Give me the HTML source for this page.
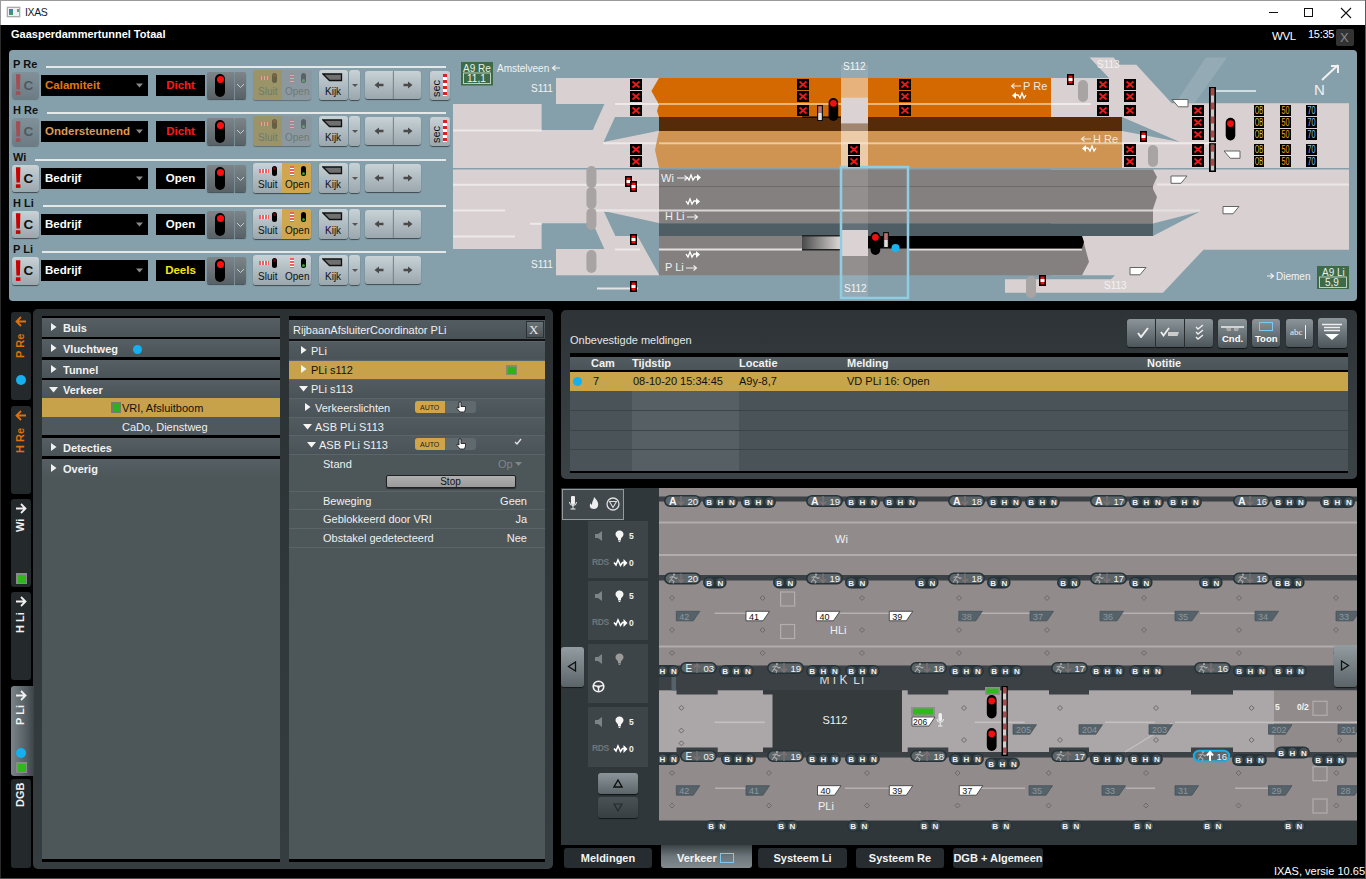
<!DOCTYPE html><html><head><meta charset="utf-8"><style>
*{margin:0;padding:0;box-sizing:border-box}
body{width:1366px;height:879px;overflow:hidden;background:#000;font-family:"Liberation Sans",sans-serif;position:relative}
.a{position:absolute}
.t{position:absolute;white-space:nowrap;line-height:1}
</style></head><body>
<div class="a" style="left:0;top:0;width:1366px;height:25px;background:#fff;border-top:1px solid #9a9a9a;border-left:1px solid #9a9a9a"></div><div class="a" style="left:0;top:25px;width:1px;height:854px;background:#2a2a2a"></div><div class="a" style="left:1365px;top:0;width:1px;height:879px;background:#5a5a5a"></div><div class="a" style="left:7px;top:7px;width:12.5px;height:10px;background:#eef0f2;border:1px solid #a8acb0;box-shadow:0 0 0 0.5px #ccc"></div><div class="a" style="left:9px;top:9px;width:4px;height:6px;background:linear-gradient(#4a7ab0,#3aa060)"></div><div class="a" style="left:17px;top:9px;width:2px;height:3px;background:linear-gradient(#5a90c0,#60b070)"></div><div class="t" style="left:25px;top:7px;font-size:10.5px;letter-spacing:-0.35px;color:#1a1a1a">IXAS</div><div class="a" style="left:1269px;top:12px;width:9px;height:1px;background:#111"></div><div class="a" style="left:1304px;top:8px;width:9px;height:9px;border:1px solid #111"></div><svg class="a" style="left:1340px;top:7px" width="12" height="12"><path d="M1 1L11 11M11 1L1 11" stroke="#111" stroke-width="1.1"/></svg><div class="t" style="left:11px;top:29px;font-size:11px;font-weight:bold;color:#fff">Gaasperdammertunnel Totaal</div><div class="t" style="left:1272px;top:30.5px;font-size:11.5px;letter-spacing:-0.4px;color:#fff">WVL</div><div class="t" style="left:1308px;top:28.5px;font-size:11px;letter-spacing:-0.3px;color:#fff">15:35</div><div class="a" style="left:1336px;top:29px;width:18px;height:17px;background:#333;border-radius:2px"></div><div class="t" style="left:1340px;top:31px;font-size:13px;color:#888">X</div><div class="a" style="left:9px;top:50px;width:1348px;height:251px;background:#86a0ab;border-radius:4px"></div><div class="t" style="left:13px;top:58.7px;font-size:11px;font-weight:bold;color:#111">P Re</div><div class="a" style="left:46px;top:65.7px;width:400px;height:2px;background:#e4e8e9"></div><div class="a" style="left:11.5px;top:71.7px;width:27.5px;height:27.5px;background:linear-gradient(#819199,#6d7c84);border-radius:3px;box-shadow:0 1px 1px rgba(0,0,0,.25)"></div><svg class="a" style="left:15px;top:74.2px" width="6" height="22"><path d="M0.9 0.2H5.4L4.9 15.5H1.4Z" fill="#a24e54"/><rect x="0.9" y="17.3" width="4.5" height="3.6" fill="#a24e54"/></svg><div class="t" style="left:23.5px;top:78.7px;font-size:13.5px;font-weight:bold;color:#4f5a5f">C</div><div class="a" style="left:41px;top:74.7px;width:107px;height:21px;background:#000"></div><div class="t" style="left:45px;top:79.7px;font-size:11.5px;font-weight:bold;color:#e0780f">Calamiteit</div><svg class="a" style="left:136px;top:82.7px" width="7" height="5"><path d="M0 0.5H7L3.5 4.5Z" fill="#8a8a8a"/></svg><div class="a" style="left:156px;top:74.7px;width:49px;height:21px;background:#000"></div><div class="t" style="left:156px;width:49px;text-align:center;top:79.7px;font-size:11.5px;font-weight:bold;color:#ff1a1a">Dicht</div><div class="a" style="left:207px;top:71.7px;width:27px;height:27px;background:linear-gradient(#7d8589,#586166);box-shadow:0 1px 1px rgba(0,0,0,.5);border-radius:2px 0 0 2px"></div><div class="a" style="left:235px;top:71.7px;width:11px;height:27px;background:linear-gradient(#7d8589,#586166);box-shadow:0 1px 1px rgba(0,0,0,.5);border-radius:0 2px 2px 0"></div><div class="a" style="left:215px;top:73.7px;width:10px;height:23px;background:#000;border-radius:5px"></div><div class="a" style="left:216.5px;top:75.7px;width:7px;height:7px;background:#ff1010;border-radius:50%"></div><svg class="a" style="left:237px;top:83.7px" width="7" height="4"><path d="M0 0L3.5 3.5L7 0" stroke="#c8cdd0" fill="none" stroke-width="1"/></svg><div class="a" style="left:253px;top:69.7px;width:58px;height:30px;background:#8b98a0;border-radius:3px;box-shadow:0 1px 1px rgba(0,0,0,.3)"></div><div class="a" style="left:253px;top:69.7px;width:29px;height:30px;background:#9b9468;border-radius:3px 0 0 3px"></div><div class="a" style="left:259px;top:75.7px;width:10px;height:4px;opacity:0.35;background:repeating-linear-gradient(90deg,#f06060 0 2px,#fff 2px 3px)"></div><div class="a" style="left:272px;top:72.7px;width:5px;height:10px;background:#000;border-radius:2.5px;opacity:0.35"><div style="margin:1px auto 0;width:3px;height:3px;border-radius:50%;background:#7a0000"></div></div><div class="a" style="left:290px;top:72.7px;width:4px;height:10px;opacity:0.35;background:repeating-linear-gradient(180deg,#f06060 0 2px,#fff 2px 3px)"></div><div class="a" style="left:301px;top:72.7px;width:5px;height:10px;background:#000;border-radius:2.5px;opacity:0.35"><div style="margin:6px auto 0;width:3px;height:3px;border-radius:50%;background:#2fa02f"></div></div><div class="t" style="left:258px;top:86.7px;font-size:10px;color:#6e7a74">Sluit</div><div class="t" style="left:285px;top:86.7px;font-size:10px;color:#6e7a74">Open</div><div class="a" style="left:319px;top:69.7px;width:29px;height:30px;background:linear-gradient(#c8d2d7,#9aa7ad);border-radius:3px;box-shadow:0 1px 1px rgba(0,0,0,.55)"></div><div class="a" style="left:349px;top:69.7px;width:11px;height:30px;background:linear-gradient(#c8d2d7,#9aa7ad);border-radius:3px;box-shadow:0 1px 1px rgba(0,0,0,.55)"></div><svg class="a" style="left:322px;top:72.7px" width="21" height="9"><path d="M1 1H19.5V7.5H7.5Z" fill="#707070" stroke="#111" stroke-width="1.3"/></svg><div class="t" style="left:325px;top:86.7px;font-size:10px;color:#111">Kijk</div><svg class="a" style="left:352px;top:83.7px" width="6" height="4"><path d="M0 0H6L3 3Z" fill="#555"/></svg><div class="a" style="left:365px;top:70.7px;width:28px;height:28px;background:linear-gradient(#c8d2d7,#9aa7ad);border-radius:3px;box-shadow:0 1px 1px rgba(0,0,0,.55);border-radius:3px 0 0 3px"></div><div class="a" style="left:393px;top:70.7px;width:28px;height:28px;background:linear-gradient(#c8d2d7,#9aa7ad);border-radius:3px;box-shadow:0 1px 1px rgba(0,0,0,.55);border-radius:0 3px 3px 0;border-left:1px solid #7b888e"></div><svg class="a" style="left:374px;top:80.7px" width="10" height="8"><path d="M0.5 4L5 0.5V2.8H9.5V5.2H5V7.5Z" fill="#4a4a4a"/></svg><svg class="a" style="left:403px;top:80.7px" width="10" height="8"><path d="M9.5 4L5 0.5V2.8H0.5V5.2H5V7.5Z" fill="#4a4a4a"/></svg><div class="a" style="left:430px;top:70.7px;width:20px;height:29px;background:linear-gradient(#c8d2d7,#9aa7ad);border-radius:3px;box-shadow:0 1px 1px rgba(0,0,0,.55)"></div><div class="t" style="left:431px;top:96.7px;font-size:11px;color:#111;transform:rotate(-90deg);transform-origin:0 0">sec</div><div class="a" style="left:443px;top:73.7px;width:4px;height:22px;background:repeating-linear-gradient(180deg,#e02020 0 3px,#fff 3px 6px)"></div><div class="t" style="left:13px;top:105.1px;font-size:11px;font-weight:bold;color:#111">H Re</div><div class="a" style="left:47px;top:112.1px;width:399px;height:2px;background:#e4e8e9"></div><div class="a" style="left:11.5px;top:118.1px;width:27.5px;height:27.5px;background:linear-gradient(#819199,#6d7c84);border-radius:3px;box-shadow:0 1px 1px rgba(0,0,0,.25)"></div><svg class="a" style="left:15px;top:120.6px" width="6" height="22"><path d="M0.9 0.2H5.4L4.9 15.5H1.4Z" fill="#a24e54"/><rect x="0.9" y="17.3" width="4.5" height="3.6" fill="#a24e54"/></svg><div class="t" style="left:23.5px;top:125.1px;font-size:13.5px;font-weight:bold;color:#4f5a5f">C</div><div class="a" style="left:41px;top:121.1px;width:107px;height:21px;background:#000"></div><div class="t" style="left:45px;top:126.1px;font-size:11.5px;font-weight:bold;color:#dc9a55">Ondersteunend</div><svg class="a" style="left:136px;top:129.1px" width="7" height="5"><path d="M0 0.5H7L3.5 4.5Z" fill="#8a8a8a"/></svg><div class="a" style="left:156px;top:121.1px;width:49px;height:21px;background:#000"></div><div class="t" style="left:156px;width:49px;text-align:center;top:126.1px;font-size:11.5px;font-weight:bold;color:#ff1a1a">Dicht</div><div class="a" style="left:207px;top:118.1px;width:27px;height:27px;background:linear-gradient(#7d8589,#586166);box-shadow:0 1px 1px rgba(0,0,0,.5);border-radius:2px 0 0 2px"></div><div class="a" style="left:235px;top:118.1px;width:11px;height:27px;background:linear-gradient(#7d8589,#586166);box-shadow:0 1px 1px rgba(0,0,0,.5);border-radius:0 2px 2px 0"></div><div class="a" style="left:215px;top:120.1px;width:10px;height:23px;background:#000;border-radius:5px"></div><div class="a" style="left:216.5px;top:122.1px;width:7px;height:7px;background:#ff1010;border-radius:50%"></div><svg class="a" style="left:237px;top:130.1px" width="7" height="4"><path d="M0 0L3.5 3.5L7 0" stroke="#c8cdd0" fill="none" stroke-width="1"/></svg><div class="a" style="left:253px;top:116.1px;width:58px;height:30px;background:#8b98a0;border-radius:3px;box-shadow:0 1px 1px rgba(0,0,0,.3)"></div><div class="a" style="left:253px;top:116.1px;width:29px;height:30px;background:#9b9468;border-radius:3px 0 0 3px"></div><div class="a" style="left:259px;top:122.1px;width:10px;height:4px;opacity:0.35;background:repeating-linear-gradient(90deg,#f06060 0 2px,#fff 2px 3px)"></div><div class="a" style="left:272px;top:119.1px;width:5px;height:10px;background:#000;border-radius:2.5px;opacity:0.35"><div style="margin:1px auto 0;width:3px;height:3px;border-radius:50%;background:#7a0000"></div></div><div class="a" style="left:290px;top:119.1px;width:4px;height:10px;opacity:0.35;background:repeating-linear-gradient(180deg,#f06060 0 2px,#fff 2px 3px)"></div><div class="a" style="left:301px;top:119.1px;width:5px;height:10px;background:#000;border-radius:2.5px;opacity:0.35"><div style="margin:6px auto 0;width:3px;height:3px;border-radius:50%;background:#2fa02f"></div></div><div class="t" style="left:258px;top:133.1px;font-size:10px;color:#6e7a74">Sluit</div><div class="t" style="left:285px;top:133.1px;font-size:10px;color:#6e7a74">Open</div><div class="a" style="left:319px;top:116.1px;width:29px;height:30px;background:linear-gradient(#c8d2d7,#9aa7ad);border-radius:3px;box-shadow:0 1px 1px rgba(0,0,0,.55)"></div><div class="a" style="left:349px;top:116.1px;width:11px;height:30px;background:linear-gradient(#c8d2d7,#9aa7ad);border-radius:3px;box-shadow:0 1px 1px rgba(0,0,0,.55)"></div><svg class="a" style="left:322px;top:119.1px" width="21" height="9"><path d="M1 1H19.5V7.5H7.5Z" fill="#707070" stroke="#111" stroke-width="1.3"/></svg><div class="t" style="left:325px;top:133.1px;font-size:10px;color:#111">Kijk</div><svg class="a" style="left:352px;top:130.1px" width="6" height="4"><path d="M0 0H6L3 3Z" fill="#555"/></svg><div class="a" style="left:365px;top:117.1px;width:28px;height:28px;background:linear-gradient(#c8d2d7,#9aa7ad);border-radius:3px;box-shadow:0 1px 1px rgba(0,0,0,.55);border-radius:3px 0 0 3px"></div><div class="a" style="left:393px;top:117.1px;width:28px;height:28px;background:linear-gradient(#c8d2d7,#9aa7ad);border-radius:3px;box-shadow:0 1px 1px rgba(0,0,0,.55);border-radius:0 3px 3px 0;border-left:1px solid #7b888e"></div><svg class="a" style="left:374px;top:127.1px" width="10" height="8"><path d="M0.5 4L5 0.5V2.8H9.5V5.2H5V7.5Z" fill="#4a4a4a"/></svg><svg class="a" style="left:403px;top:127.1px" width="10" height="8"><path d="M9.5 4L5 0.5V2.8H0.5V5.2H5V7.5Z" fill="#4a4a4a"/></svg><div class="a" style="left:430px;top:117.1px;width:20px;height:29px;background:linear-gradient(#c8d2d7,#9aa7ad);border-radius:3px;box-shadow:0 1px 1px rgba(0,0,0,.55)"></div><div class="t" style="left:431px;top:143.1px;font-size:11px;color:#111;transform:rotate(-90deg);transform-origin:0 0">sec</div><div class="a" style="left:443px;top:120.1px;width:4px;height:22px;background:repeating-linear-gradient(180deg,#e02020 0 3px,#fff 3px 6px)"></div><div class="t" style="left:13px;top:151.5px;font-size:11px;font-weight:bold;color:#111">Wi</div><div class="a" style="left:35px;top:158.5px;width:411px;height:2px;background:#e4e8e9"></div><div class="a" style="left:11.5px;top:164.5px;width:27.5px;height:27.5px;background:linear-gradient(#c8d2d7,#9aa7ad);border-radius:3px;box-shadow:0 1px 1px rgba(0,0,0,.55)"></div><svg class="a" style="left:15px;top:167.0px" width="6" height="22"><path d="M0.9 0.2H5.4L4.9 15.5H1.4Z" fill="#c80000"/><rect x="0.9" y="17.3" width="4.5" height="3.6" fill="#c80000"/></svg><div class="t" style="left:23.5px;top:171.5px;font-size:13.5px;font-weight:bold;color:#111">C</div><div class="a" style="left:41px;top:167.5px;width:107px;height:21px;background:#000"></div><div class="t" style="left:45px;top:172.5px;font-size:11.5px;font-weight:bold;color:#ffffff">Bedrijf</div><svg class="a" style="left:136px;top:175.5px" width="7" height="5"><path d="M0 0.5H7L3.5 4.5Z" fill="#8a8a8a"/></svg><div class="a" style="left:156px;top:167.5px;width:49px;height:21px;background:#000"></div><div class="t" style="left:156px;width:49px;text-align:center;top:172.5px;font-size:11.5px;font-weight:bold;color:#ffffff">Open</div><div class="a" style="left:207px;top:164.5px;width:27px;height:27px;background:linear-gradient(#7d8589,#586166);box-shadow:0 1px 1px rgba(0,0,0,.5);border-radius:2px 0 0 2px"></div><div class="a" style="left:235px;top:164.5px;width:11px;height:27px;background:linear-gradient(#7d8589,#586166);box-shadow:0 1px 1px rgba(0,0,0,.5);border-radius:0 2px 2px 0"></div><div class="a" style="left:215px;top:166.5px;width:10px;height:23px;background:#000;border-radius:5px"></div><div class="a" style="left:216.5px;top:168.5px;width:7px;height:7px;background:#ff1010;border-radius:50%"></div><svg class="a" style="left:237px;top:176.5px" width="7" height="4"><path d="M0 0L3.5 3.5L7 0" stroke="#c8cdd0" fill="none" stroke-width="1"/></svg><div class="a" style="left:253px;top:162.5px;width:58px;height:30px;background:linear-gradient(#c8d2d7,#9aa7ad);border-radius:3px;box-shadow:0 1px 1px rgba(0,0,0,.55)"></div><div class="a" style="left:282px;top:162.5px;width:29px;height:30px;background:#d0a64e;border-radius:0 3px 3px 0"></div><div class="a" style="left:259px;top:168.5px;width:10px;height:4px;opacity:1;background:repeating-linear-gradient(90deg,#f06060 0 2px,#fff 2px 3px)"></div><div class="a" style="left:272px;top:165.5px;width:5px;height:10px;background:#000;border-radius:2.5px;opacity:1"><div style="margin:1px auto 0;width:3px;height:3px;border-radius:50%;background:#7a0000"></div></div><div class="a" style="left:290px;top:165.5px;width:4px;height:10px;opacity:1;background:repeating-linear-gradient(180deg,#f06060 0 2px,#fff 2px 3px)"></div><div class="a" style="left:301px;top:165.5px;width:5px;height:10px;background:#000;border-radius:2.5px;opacity:1"><div style="margin:6px auto 0;width:3px;height:3px;border-radius:50%;background:#2fa02f"></div></div><div class="t" style="left:258px;top:179.5px;font-size:10px;color:#111">Sluit</div><div class="t" style="left:285px;top:179.5px;font-size:10px;color:#111">Open</div><div class="a" style="left:319px;top:162.5px;width:29px;height:30px;background:linear-gradient(#c8d2d7,#9aa7ad);border-radius:3px;box-shadow:0 1px 1px rgba(0,0,0,.55)"></div><div class="a" style="left:349px;top:162.5px;width:11px;height:30px;background:linear-gradient(#c8d2d7,#9aa7ad);border-radius:3px;box-shadow:0 1px 1px rgba(0,0,0,.55)"></div><svg class="a" style="left:322px;top:165.5px" width="21" height="9"><path d="M1 1H19.5V7.5H7.5Z" fill="#707070" stroke="#111" stroke-width="1.3"/></svg><div class="t" style="left:325px;top:179.5px;font-size:10px;color:#111">Kijk</div><svg class="a" style="left:352px;top:176.5px" width="6" height="4"><path d="M0 0H6L3 3Z" fill="#555"/></svg><div class="a" style="left:365px;top:163.5px;width:28px;height:28px;background:linear-gradient(#c8d2d7,#9aa7ad);border-radius:3px;box-shadow:0 1px 1px rgba(0,0,0,.55);border-radius:3px 0 0 3px"></div><div class="a" style="left:393px;top:163.5px;width:28px;height:28px;background:linear-gradient(#c8d2d7,#9aa7ad);border-radius:3px;box-shadow:0 1px 1px rgba(0,0,0,.55);border-radius:0 3px 3px 0;border-left:1px solid #7b888e"></div><svg class="a" style="left:374px;top:173.5px" width="10" height="8"><path d="M0.5 4L5 0.5V2.8H9.5V5.2H5V7.5Z" fill="#4a4a4a"/></svg><svg class="a" style="left:403px;top:173.5px" width="10" height="8"><path d="M9.5 4L5 0.5V2.8H0.5V5.2H5V7.5Z" fill="#4a4a4a"/></svg><div class="t" style="left:13px;top:197.9px;font-size:11px;font-weight:bold;color:#111">H Li</div><div class="a" style="left:43px;top:204.9px;width:403px;height:2px;background:#e4e8e9"></div><div class="a" style="left:11.5px;top:210.9px;width:27.5px;height:27.5px;background:linear-gradient(#c8d2d7,#9aa7ad);border-radius:3px;box-shadow:0 1px 1px rgba(0,0,0,.55)"></div><svg class="a" style="left:15px;top:213.4px" width="6" height="22"><path d="M0.9 0.2H5.4L4.9 15.5H1.4Z" fill="#c80000"/><rect x="0.9" y="17.3" width="4.5" height="3.6" fill="#c80000"/></svg><div class="t" style="left:23.5px;top:217.9px;font-size:13.5px;font-weight:bold;color:#111">C</div><div class="a" style="left:41px;top:213.9px;width:107px;height:21px;background:#000"></div><div class="t" style="left:45px;top:218.9px;font-size:11.5px;font-weight:bold;color:#ffffff">Bedrijf</div><svg class="a" style="left:136px;top:221.9px" width="7" height="5"><path d="M0 0.5H7L3.5 4.5Z" fill="#8a8a8a"/></svg><div class="a" style="left:156px;top:213.9px;width:49px;height:21px;background:#000"></div><div class="t" style="left:156px;width:49px;text-align:center;top:218.9px;font-size:11.5px;font-weight:bold;color:#ffffff">Open</div><div class="a" style="left:207px;top:210.9px;width:27px;height:27px;background:linear-gradient(#7d8589,#586166);box-shadow:0 1px 1px rgba(0,0,0,.5);border-radius:2px 0 0 2px"></div><div class="a" style="left:235px;top:210.9px;width:11px;height:27px;background:linear-gradient(#7d8589,#586166);box-shadow:0 1px 1px rgba(0,0,0,.5);border-radius:0 2px 2px 0"></div><div class="a" style="left:215px;top:212.9px;width:10px;height:23px;background:#000;border-radius:5px"></div><div class="a" style="left:216.5px;top:214.9px;width:7px;height:7px;background:#ff1010;border-radius:50%"></div><svg class="a" style="left:237px;top:222.9px" width="7" height="4"><path d="M0 0L3.5 3.5L7 0" stroke="#c8cdd0" fill="none" stroke-width="1"/></svg><div class="a" style="left:253px;top:208.9px;width:58px;height:30px;background:linear-gradient(#c8d2d7,#9aa7ad);border-radius:3px;box-shadow:0 1px 1px rgba(0,0,0,.55)"></div><div class="a" style="left:282px;top:208.9px;width:29px;height:30px;background:#d0a64e;border-radius:0 3px 3px 0"></div><div class="a" style="left:259px;top:214.9px;width:10px;height:4px;opacity:1;background:repeating-linear-gradient(90deg,#f06060 0 2px,#fff 2px 3px)"></div><div class="a" style="left:272px;top:211.9px;width:5px;height:10px;background:#000;border-radius:2.5px;opacity:1"><div style="margin:1px auto 0;width:3px;height:3px;border-radius:50%;background:#7a0000"></div></div><div class="a" style="left:290px;top:211.9px;width:4px;height:10px;opacity:1;background:repeating-linear-gradient(180deg,#f06060 0 2px,#fff 2px 3px)"></div><div class="a" style="left:301px;top:211.9px;width:5px;height:10px;background:#000;border-radius:2.5px;opacity:1"><div style="margin:6px auto 0;width:3px;height:3px;border-radius:50%;background:#2fa02f"></div></div><div class="t" style="left:258px;top:225.9px;font-size:10px;color:#111">Sluit</div><div class="t" style="left:285px;top:225.9px;font-size:10px;color:#111">Open</div><div class="a" style="left:319px;top:208.9px;width:29px;height:30px;background:linear-gradient(#c8d2d7,#9aa7ad);border-radius:3px;box-shadow:0 1px 1px rgba(0,0,0,.55)"></div><div class="a" style="left:349px;top:208.9px;width:11px;height:30px;background:linear-gradient(#c8d2d7,#9aa7ad);border-radius:3px;box-shadow:0 1px 1px rgba(0,0,0,.55)"></div><svg class="a" style="left:322px;top:211.9px" width="21" height="9"><path d="M1 1H19.5V7.5H7.5Z" fill="#707070" stroke="#111" stroke-width="1.3"/></svg><div class="t" style="left:325px;top:225.9px;font-size:10px;color:#111">Kijk</div><svg class="a" style="left:352px;top:222.9px" width="6" height="4"><path d="M0 0H6L3 3Z" fill="#555"/></svg><div class="a" style="left:365px;top:209.9px;width:28px;height:28px;background:linear-gradient(#c8d2d7,#9aa7ad);border-radius:3px;box-shadow:0 1px 1px rgba(0,0,0,.55);border-radius:3px 0 0 3px"></div><div class="a" style="left:393px;top:209.9px;width:28px;height:28px;background:linear-gradient(#c8d2d7,#9aa7ad);border-radius:3px;box-shadow:0 1px 1px rgba(0,0,0,.55);border-radius:0 3px 3px 0;border-left:1px solid #7b888e"></div><svg class="a" style="left:374px;top:219.9px" width="10" height="8"><path d="M0.5 4L5 0.5V2.8H9.5V5.2H5V7.5Z" fill="#4a4a4a"/></svg><svg class="a" style="left:403px;top:219.9px" width="10" height="8"><path d="M9.5 4L5 0.5V2.8H0.5V5.2H5V7.5Z" fill="#4a4a4a"/></svg><div class="t" style="left:13px;top:244.3px;font-size:11px;font-weight:bold;color:#111">P Li</div><div class="a" style="left:42px;top:251.3px;width:404px;height:2px;background:#e4e8e9"></div><div class="a" style="left:11.5px;top:257.3px;width:27.5px;height:27.5px;background:linear-gradient(#c8d2d7,#9aa7ad);border-radius:3px;box-shadow:0 1px 1px rgba(0,0,0,.55)"></div><svg class="a" style="left:15px;top:259.8px" width="6" height="22"><path d="M0.9 0.2H5.4L4.9 15.5H1.4Z" fill="#c80000"/><rect x="0.9" y="17.3" width="4.5" height="3.6" fill="#c80000"/></svg><div class="t" style="left:23.5px;top:264.3px;font-size:13.5px;font-weight:bold;color:#111">C</div><div class="a" style="left:41px;top:260.3px;width:107px;height:21px;background:#000"></div><div class="t" style="left:45px;top:265.3px;font-size:11.5px;font-weight:bold;color:#ffffff">Bedrijf</div><svg class="a" style="left:136px;top:268.3px" width="7" height="5"><path d="M0 0.5H7L3.5 4.5Z" fill="#8a8a8a"/></svg><div class="a" style="left:156px;top:260.3px;width:49px;height:21px;background:#000"></div><div class="t" style="left:156px;width:49px;text-align:center;top:265.3px;font-size:11.5px;font-weight:bold;color:#f5e612">Deels</div><div class="a" style="left:207px;top:257.3px;width:27px;height:27px;background:linear-gradient(#7d8589,#586166);box-shadow:0 1px 1px rgba(0,0,0,.5);border-radius:2px 0 0 2px"></div><div class="a" style="left:235px;top:257.3px;width:11px;height:27px;background:linear-gradient(#7d8589,#586166);box-shadow:0 1px 1px rgba(0,0,0,.5);border-radius:0 2px 2px 0"></div><div class="a" style="left:215px;top:259.3px;width:10px;height:23px;background:#000;border-radius:5px"></div><div class="a" style="left:216.5px;top:261.3px;width:7px;height:7px;background:#ff1010;border-radius:50%"></div><svg class="a" style="left:237px;top:269.3px" width="7" height="4"><path d="M0 0L3.5 3.5L7 0" stroke="#c8cdd0" fill="none" stroke-width="1"/></svg><div class="a" style="left:253px;top:255.3px;width:58px;height:30px;background:linear-gradient(#c8d2d7,#9aa7ad);border-radius:3px;box-shadow:0 1px 1px rgba(0,0,0,.55)"></div><div class="a" style="left:259px;top:261.3px;width:10px;height:4px;opacity:1;background:repeating-linear-gradient(90deg,#f06060 0 2px,#fff 2px 3px)"></div><div class="a" style="left:272px;top:258.3px;width:5px;height:10px;background:#000;border-radius:2.5px;opacity:1"><div style="margin:1px auto 0;width:3px;height:3px;border-radius:50%;background:#7a0000"></div></div><div class="a" style="left:290px;top:258.3px;width:4px;height:10px;opacity:1;background:repeating-linear-gradient(180deg,#f06060 0 2px,#fff 2px 3px)"></div><div class="a" style="left:301px;top:258.3px;width:5px;height:10px;background:#000;border-radius:2.5px;opacity:1"><div style="margin:6px auto 0;width:3px;height:3px;border-radius:50%;background:#2fa02f"></div></div><div class="t" style="left:258px;top:272.3px;font-size:10px;color:#111">Sluit</div><div class="t" style="left:285px;top:272.3px;font-size:10px;color:#111">Open</div><div class="a" style="left:319px;top:255.3px;width:29px;height:30px;background:linear-gradient(#c8d2d7,#9aa7ad);border-radius:3px;box-shadow:0 1px 1px rgba(0,0,0,.55)"></div><div class="a" style="left:349px;top:255.3px;width:11px;height:30px;background:linear-gradient(#c8d2d7,#9aa7ad);border-radius:3px;box-shadow:0 1px 1px rgba(0,0,0,.55)"></div><svg class="a" style="left:322px;top:258.3px" width="21" height="9"><path d="M1 1H19.5V7.5H7.5Z" fill="#707070" stroke="#111" stroke-width="1.3"/></svg><div class="t" style="left:325px;top:272.3px;font-size:10px;color:#111">Kijk</div><svg class="a" style="left:352px;top:269.3px" width="6" height="4"><path d="M0 0H6L3 3Z" fill="#555"/></svg><div class="a" style="left:365px;top:256.3px;width:28px;height:28px;background:linear-gradient(#c8d2d7,#9aa7ad);border-radius:3px;box-shadow:0 1px 1px rgba(0,0,0,.55);border-radius:3px 0 0 3px"></div><div class="a" style="left:393px;top:256.3px;width:28px;height:28px;background:linear-gradient(#c8d2d7,#9aa7ad);border-radius:3px;box-shadow:0 1px 1px rgba(0,0,0,.55);border-radius:0 3px 3px 0;border-left:1px solid #7b888e"></div><svg class="a" style="left:374px;top:266.3px" width="10" height="8"><path d="M0.5 4L5 0.5V2.8H9.5V5.2H5V7.5Z" fill="#4a4a4a"/></svg><svg class="a" style="left:403px;top:266.3px" width="10" height="8"><path d="M9.5 4L5 0.5V2.8H0.5V5.2H5V7.5Z" fill="#4a4a4a"/></svg><svg class="a" style="left:0;top:0" width="1366" height="302" font-family="Liberation Sans"><defs><linearGradient id="gb" x1="0" x2="1"><stop offset="0" stop-color="#4a4a4a"/><stop offset="1" stop-color="#e0dada"/></linearGradient></defs><rect x="453" y="104" width="206" height="64" fill="#d9d1d1"/><rect x="556" y="78" width="103" height="26" fill="#d9d1d1"/><path d="M541.6 104H604.4L592.8 130H541.6Z" fill="#86a0ab"/><path d="M615 117H659V130.7L603.6 142Z" fill="#86a0ab"/><rect x="453" y="169.5" width="206" height="79.5" fill="#d9d1d1"/><rect x="556" y="249" width="103" height="26.3" fill="#d9d1d1"/><path d="M541.6 223.3H592.8L604.4 249H541.6Z" fill="#86a0ab"/><path d="M603.6 211L659 223V274.5L637.5 236H615.4Z" fill="#86a0ab"/><rect x="453" y="129.5" width="88.60000000000002" height="2" fill="#efebeb" opacity="0.9"/><rect x="615" y="103" width="44" height="2" fill="#efebeb" opacity="0.9"/><rect x="603" y="142.3" width="56" height="2" fill="#efebeb" opacity="0.9"/><rect x="453" y="183.8" width="206" height="2" fill="#efebeb" opacity="0.9"/><rect x="453" y="209.5" width="52" height="2" fill="#efebeb" opacity="0.9"/><rect x="596" y="209.5" width="63" height="2" fill="#efebeb" opacity="0.9"/><rect x="530" y="222.8" width="11.600000000000023" height="2" fill="#efebeb" opacity="0.9"/><rect x="453" y="235.5" width="62" height="2" fill="#efebeb" opacity="0.9"/><rect x="615" y="248.5" width="25" height="2" fill="#efebeb" opacity="0.9"/><rect x="597" y="287.5" width="41" height="2" fill="#efebeb" opacity="0.9"/><path d="M1051 78H1109L1089.6 57.4H1113.7L1119 64.7H1136.3L1171.7 103.3H1349V168H1051Z" fill="#d9d1d1"/><path d="M1051 169.5H1349V249.7H1203.5L1163 292.7H1005V279.3H1111L1115 275.3H1051Z" fill="#d9d1d1"/><path d="M1206 57.5H1227L1194.6 103H1175.6Z" fill="#fff" opacity="0.12"/><rect x="1215" y="90" width="41" height="2" fill="#cfdde2"/><path d="M659 78H1051V117H659L657 111L659 104.5L651.4 91Z" fill="#d36900"/><rect x="659" y="117" width="463" height="14" fill="#552b09"/><path d="M659 131H1122V168H659L655 150Z" fill="#cf9352"/><rect x="659" y="103" width="392" height="2" fill="#eab57a"/><rect x="659" y="142.3" width="463" height="2" fill="#ecc9a0"/><rect x="1051" y="103" width="40" height="2" fill="#efebeb"/><rect x="1122" y="142.3" width="87" height="2" fill="#efebeb"/><path d="M1122 117L1180 142L1122 131Z" fill="#86a0ab"/><path d="M659 169.5H1153L1157 177L1153 186V189L1157 197L1153 209V223.3H659Z" fill="#858080"/><rect x="659" y="186" width="494" height="1" fill="#6f6a6a"/><rect x="596" y="209.5" width="604" height="2" fill="#e8e4e4" opacity="0.85"/><rect x="1157" y="183.5" width="192" height="2" fill="#ebe7e7"/><rect x="659" y="223.3" width="494" height="12.7" fill="#4f5d65"/><path d="M1153 223.5L1200 211.5L1153 236Z" fill="#86a0ab"/><path d="M659 236H1082L1089 262L1082 275.3H659Z" fill="#858080"/><rect x="659" y="248.5" width="143" height="2" fill="#e4e0e0"/><rect x="909" y="248.5" width="173" height="2" fill="#e4e0e0"/><rect x="802" y="235.5" width="39" height="14.5" fill="url(#gb)"/><rect x="802" y="235" width="39" height="1.5" fill="#222"/><rect x="802" y="249" width="39" height="1.5" fill="#222"/><path d="M868 236H1082L1084 242L1082 248.5H868Z" fill="#000"/><rect x="841" y="65" width="27" height="233" fill="#fff" opacity="0.12"/><rect x="841" y="78" width="27" height="39" fill="#e8b27c"/><rect x="841" y="117" width="27" height="14" fill="#a08670"/><rect x="841" y="131" width="27" height="37" fill="#ebcba8"/><rect x="841" y="142.3" width="27" height="2" fill="#f4e0c8"/><rect x="841" y="97.7" width="27" height="25.7" fill="#dbd3d3"/><rect x="841" y="230" width="27" height="26" fill="#dbd3d3"/><rect x="841" y="167" width="67" height="131" fill="none" stroke="#8fcde2" stroke-width="2.5"/><text x="843" y="70" font-size="10" fill="#f4f4f4">S112</text><text x="844" y="292" font-size="10" fill="#f4f4f4">S112</text><rect x="802" y="116.5" width="39" height="1.2" fill="#000"/><rect x="817" y="105" width="6" height="16" fill="#111"/><rect x="818.2" y="106.2" width="3.6" height="6" fill="#c07070"/><rect x="818.2" y="112.5" width="3.6" height="7.5" fill="#ddd"/><rect x="828.6" y="98" width="9.6" height="23" rx="4.8" fill="#000"/><circle cx="833.4" cy="103.3" r="3.4" fill="#f01010"/><rect x="870.6" y="232" width="9.6" height="23" rx="4.8" fill="#000"/><circle cx="875.4" cy="237.3" r="3.4" fill="#f01010"/><rect x="883" y="232" width="6" height="16" fill="#111"/><rect x="884.2" y="233.2" width="3.6" height="6" fill="#c07070"/><rect x="884.2" y="239.5" width="3.6" height="7.5" fill="#ddd"/><circle cx="895.5" cy="248" r="4" fill="#19b4f0"/><rect x="630" y="79" width="12" height="11" fill="#000"/><path d="M632.5 81.5L639.5 87.5M639.5 81.5L632.5 87.5" stroke="#f01818" stroke-width="1.8"/><rect x="630" y="91" width="12" height="11" fill="#000"/><path d="M632.5 93.5L639.5 99.5M639.5 93.5L632.5 99.5" stroke="#f01818" stroke-width="1.8"/><rect x="630" y="105" width="12" height="11" fill="#000"/><path d="M632.5 107.5L639.5 113.5M639.5 107.5L632.5 113.5" stroke="#f01818" stroke-width="1.8"/><rect x="630" y="144" width="12" height="11" fill="#000"/><path d="M632.5 146.5L639.5 152.5M639.5 146.5L632.5 152.5" stroke="#f01818" stroke-width="1.8"/><rect x="630" y="156" width="12" height="11" fill="#000"/><path d="M632.5 158.5L639.5 164.5M639.5 158.5L632.5 164.5" stroke="#f01818" stroke-width="1.8"/><rect x="797" y="79" width="12" height="11" fill="#000"/><path d="M799.5 81.5L806.5 87.5M806.5 81.5L799.5 87.5" stroke="#f01818" stroke-width="1.8"/><rect x="899" y="79" width="12" height="11" fill="#000"/><path d="M901.5 81.5L908.5 87.5M908.5 81.5L901.5 87.5" stroke="#f01818" stroke-width="1.8"/><rect x="1097" y="79" width="12" height="11" fill="#000"/><path d="M1099.5 81.5L1106.5 87.5M1106.5 81.5L1099.5 87.5" stroke="#f01818" stroke-width="1.8"/><rect x="797" y="91" width="12" height="11" fill="#000"/><path d="M799.5 93.5L806.5 99.5M806.5 93.5L799.5 99.5" stroke="#f01818" stroke-width="1.8"/><rect x="899" y="91" width="12" height="11" fill="#000"/><path d="M901.5 93.5L908.5 99.5M908.5 93.5L901.5 99.5" stroke="#f01818" stroke-width="1.8"/><rect x="1097" y="91" width="12" height="11" fill="#000"/><path d="M1099.5 93.5L1106.5 99.5M1106.5 93.5L1099.5 99.5" stroke="#f01818" stroke-width="1.8"/><rect x="797" y="105" width="12" height="11" fill="#000"/><path d="M799.5 107.5L806.5 113.5M806.5 107.5L799.5 113.5" stroke="#f01818" stroke-width="1.8"/><rect x="899" y="105" width="12" height="11" fill="#000"/><path d="M901.5 107.5L908.5 113.5M908.5 107.5L901.5 113.5" stroke="#f01818" stroke-width="1.8"/><rect x="1097" y="105" width="12" height="11" fill="#000"/><path d="M1099.5 107.5L1106.5 113.5M1106.5 107.5L1099.5 113.5" stroke="#f01818" stroke-width="1.8"/><rect x="1124" y="79" width="12" height="11" fill="#000"/><path d="M1126.5 81.5L1133.5 87.5M1133.5 81.5L1126.5 87.5" stroke="#f01818" stroke-width="1.8"/><rect x="1124" y="91" width="12" height="11" fill="#000"/><path d="M1126.5 93.5L1133.5 99.5M1133.5 93.5L1126.5 99.5" stroke="#f01818" stroke-width="1.8"/><rect x="1124" y="105" width="12" height="11" fill="#000"/><path d="M1126.5 107.5L1133.5 113.5M1133.5 107.5L1126.5 113.5" stroke="#f01818" stroke-width="1.8"/><rect x="1124" y="144" width="12" height="11" fill="#000"/><path d="M1126.5 146.5L1133.5 152.5M1133.5 146.5L1126.5 152.5" stroke="#f01818" stroke-width="1.8"/><rect x="1124" y="156" width="12" height="11" fill="#000"/><path d="M1126.5 158.5L1133.5 164.5M1133.5 158.5L1126.5 164.5" stroke="#f01818" stroke-width="1.8"/><rect x="848" y="144" width="12" height="11" fill="#000"/><path d="M850.5 146.5L857.5 152.5M857.5 146.5L850.5 152.5" stroke="#f01818" stroke-width="1.8"/><rect x="848" y="156" width="12" height="11" fill="#000"/><path d="M850.5 158.5L857.5 164.5M857.5 158.5L850.5 164.5" stroke="#f01818" stroke-width="1.8"/><rect x="1192" y="105" width="12" height="11" fill="#000"/><path d="M1194.5 107.5L1201.5 113.5M1201.5 107.5L1194.5 113.5" stroke="#f01818" stroke-width="1.8"/><rect x="1192" y="117" width="12" height="11" fill="#000"/><path d="M1194.5 119.5L1201.5 125.5M1201.5 119.5L1194.5 125.5" stroke="#f01818" stroke-width="1.8"/><rect x="1192" y="129" width="12" height="11" fill="#000"/><path d="M1194.5 131.5L1201.5 137.5M1201.5 131.5L1194.5 137.5" stroke="#f01818" stroke-width="1.8"/><rect x="1192" y="144" width="12" height="11" fill="#000"/><path d="M1194.5 146.5L1201.5 152.5M1201.5 146.5L1194.5 152.5" stroke="#f01818" stroke-width="1.8"/><rect x="1192" y="156" width="12" height="11" fill="#000"/><path d="M1194.5 158.5L1201.5 164.5M1201.5 158.5L1194.5 164.5" stroke="#f01818" stroke-width="1.8"/><rect x="625" y="176" width="7" height="11" fill="#000"/><rect x="626.5" y="177.5" width="4" height="8" fill="#f01010"/><rect x="626.5" y="180" width="4" height="3" fill="#fff"/><rect x="630" y="181" width="7" height="11" fill="#000"/><rect x="631.5" y="182.5" width="4" height="8" fill="#f01010"/><rect x="631.5" y="185" width="4" height="3" fill="#fff"/><rect x="630" y="234" width="7" height="11" fill="#000"/><rect x="631.5" y="235.5" width="4" height="8" fill="#f01010"/><rect x="631.5" y="238" width="4" height="3" fill="#fff"/><rect x="630" y="281" width="7" height="11" fill="#000"/><rect x="631.5" y="282.5" width="4" height="8" fill="#f01010"/><rect x="631.5" y="285" width="4" height="3" fill="#fff"/><rect x="1067" y="74" width="7" height="11" fill="#000"/><rect x="1068.5" y="75.5" width="4" height="8" fill="#f01010"/><rect x="1068.5" y="78" width="4" height="3" fill="#fff"/><rect x="1140" y="131" width="7" height="11" fill="#000"/><rect x="1141.5" y="132.5" width="4" height="8" fill="#f01010"/><rect x="1141.5" y="135" width="4" height="3" fill="#fff"/><rect x="1039" y="275" width="7" height="11" fill="#000"/><rect x="1040.5" y="276.5" width="4" height="8" fill="#f01010"/><rect x="1040.5" y="279" width="4" height="3" fill="#fff"/><rect x="586.4" y="166" width="10" height="22" rx="5" fill="#a9a4a4"/><rect x="586.4" y="187" width="10" height="22" rx="5" fill="#a9a4a4"/><rect x="586.4" y="208" width="10" height="22" rx="5" fill="#a9a4a4"/><rect x="586.4" y="250" width="10" height="23" rx="5" fill="#a9a4a4"/><rect x="1078" y="80" width="10" height="22" rx="5" fill="#a9a4a4"/><rect x="1148" y="145" width="10" height="22" rx="5" fill="#a9a4a4"/><rect x="1026" y="276" width="10" height="22" rx="5" fill="#a9a4a4"/><rect x="1209" y="87" width="7" height="55" fill="#000"/><rect x="1210.8" y="88.5" width="3.4" height="52" fill="#c8c8c8"/><rect x="1210.8" y="88.5" width="3.4" height="7" fill="#b04848"/><rect x="1210.8" y="102.5" width="3.4" height="7" fill="#b04848"/><rect x="1210.8" y="116.5" width="3.4" height="7" fill="#b04848"/><rect x="1210.8" y="130.5" width="3.4" height="7" fill="#b04848"/><rect x="1209" y="143.2" width="7" height="28.80000000000001" fill="#000"/><rect x="1210.8" y="144.7" width="3.4" height="25.80000000000001" fill="#c8c8c8"/><rect x="1210.8" y="144.7" width="3.4" height="7" fill="#b04848"/><rect x="1210.8" y="158.7" width="3.4" height="7" fill="#b04848"/><rect x="1225.7" y="117.8" width="9.6" height="22.6" rx="4.8" fill="#000"/><circle cx="1230.5" cy="123.6" r="3.4" fill="#f01010"/><path d="M1172 99.5H1188V106.8H1178.3Z" fill="#fff" stroke="#555" stroke-width="0.9"/><path d="M1224 151H1240V158.3H1230.3Z" fill="#fff" stroke="#555" stroke-width="0.9"/><path d="M1171 176H1187L1181 183.3H1171Z" fill="#fff" stroke="#555" stroke-width="0.9"/><path d="M1223 206.5H1239L1233 213.8H1223Z" fill="#fff" stroke="#555" stroke-width="0.9"/><path d="M1130 267.5H1146L1140 274.8H1130Z" fill="#fff" stroke="#555" stroke-width="0.9"/><rect x="1254" y="105" width="10" height="11" fill="#000"/><text x="1254.75" y="114.2" font-size="10" fill="#d4cc48" textLength="8.5" lengthAdjust="spacingAndGlyphs" font-family="Liberation Sans Narrow, Liberation Sans">OB</text><rect x="1280" y="105" width="11" height="11" fill="#000"/><text x="1281.5" y="114.2" font-size="10" fill="#f4a428" textLength="8" lengthAdjust="spacingAndGlyphs" font-family="Liberation Sans Narrow, Liberation Sans">50</text><rect x="1306" y="105" width="11" height="11" fill="#000"/><text x="1307.5" y="114.2" font-size="10" fill="#88c4f0" textLength="8" lengthAdjust="spacingAndGlyphs" font-family="Liberation Sans Narrow, Liberation Sans">70</text><rect x="1254" y="117" width="10" height="11" fill="#000"/><text x="1254.75" y="126.2" font-size="10" fill="#d4cc48" textLength="8.5" lengthAdjust="spacingAndGlyphs" font-family="Liberation Sans Narrow, Liberation Sans">OB</text><rect x="1280" y="117" width="11" height="11" fill="#000"/><text x="1281.5" y="126.2" font-size="10" fill="#f4a428" textLength="8" lengthAdjust="spacingAndGlyphs" font-family="Liberation Sans Narrow, Liberation Sans">50</text><rect x="1306" y="117" width="11" height="11" fill="#000"/><text x="1307.5" y="126.2" font-size="10" fill="#88c4f0" textLength="8" lengthAdjust="spacingAndGlyphs" font-family="Liberation Sans Narrow, Liberation Sans">70</text><rect x="1254" y="129" width="10" height="11" fill="#000"/><text x="1254.75" y="138.2" font-size="10" fill="#d4cc48" textLength="8.5" lengthAdjust="spacingAndGlyphs" font-family="Liberation Sans Narrow, Liberation Sans">OB</text><rect x="1280" y="129" width="11" height="11" fill="#000"/><text x="1281.5" y="138.2" font-size="10" fill="#f4a428" textLength="8" lengthAdjust="spacingAndGlyphs" font-family="Liberation Sans Narrow, Liberation Sans">50</text><rect x="1306" y="129" width="11" height="11" fill="#000"/><text x="1307.5" y="138.2" font-size="10" fill="#88c4f0" textLength="8" lengthAdjust="spacingAndGlyphs" font-family="Liberation Sans Narrow, Liberation Sans">70</text><rect x="1254" y="144" width="10" height="11" fill="#000"/><text x="1254.75" y="153.2" font-size="10" fill="#d4cc48" textLength="8.5" lengthAdjust="spacingAndGlyphs" font-family="Liberation Sans Narrow, Liberation Sans">OB</text><rect x="1280" y="144" width="11" height="11" fill="#000"/><text x="1281.5" y="153.2" font-size="10" fill="#f4a428" textLength="8" lengthAdjust="spacingAndGlyphs" font-family="Liberation Sans Narrow, Liberation Sans">50</text><rect x="1306" y="144" width="11" height="11" fill="#000"/><text x="1307.5" y="153.2" font-size="10" fill="#88c4f0" textLength="8" lengthAdjust="spacingAndGlyphs" font-family="Liberation Sans Narrow, Liberation Sans">70</text><rect x="1254" y="156" width="10" height="11" fill="#000"/><text x="1254.75" y="165.2" font-size="10" fill="#d4cc48" textLength="8.5" lengthAdjust="spacingAndGlyphs" font-family="Liberation Sans Narrow, Liberation Sans">OB</text><rect x="1280" y="156" width="11" height="11" fill="#000"/><text x="1281.5" y="165.2" font-size="10" fill="#f4a428" textLength="8" lengthAdjust="spacingAndGlyphs" font-family="Liberation Sans Narrow, Liberation Sans">50</text><rect x="1306" y="156" width="11" height="11" fill="#000"/><text x="1307.5" y="165.2" font-size="10" fill="#88c4f0" textLength="8" lengthAdjust="spacingAndGlyphs" font-family="Liberation Sans Narrow, Liberation Sans">70</text><path d="M1322 80L1338 65M1331 66H1338V73" stroke="#f0f0f0" stroke-width="2" fill="none"/><text x="1314" y="95" font-size="15" fill="#f0f0f0">N</text><rect x="461" y="62" width="32" height="23.5" fill="#3e6b47"/><text x="463" y="71.5" font-size="10" fill="#e6efe6">A9 Re</text><rect x="463.5" y="73" width="27" height="10.5" fill="none" stroke="#c8dcc8" stroke-width="0.9"/><text x="467" y="82" font-size="10" fill="#f0f0f0">11,1</text><rect x="1317" y="266" width="32" height="23" fill="#3e6b47"/><text x="1322" y="275.5" font-size="10" fill="#e6efe6">A9 Li</text><rect x="1319.5" y="277" width="27" height="10.5" fill="none" stroke="#c8dcc8" stroke-width="0.9"/><text x="1325" y="286" font-size="10" fill="#f0f0f0">5,9</text><text x="497" y="72" font-size="10" fill="#f2f2f2">Amstelveen</text><path d="M560 68H553M555.5 65.5L552.5 68L555.5 70.5" stroke="#f0f0f0" stroke-width="1.1" fill="none"/><text x="1276" y="280" font-size="10" fill="#f2f2f2">Diemen</text><path d="M1267 276H1273M1270.5 273.5L1273.5 276L1270.5 278.5" stroke="#f0f0f0" stroke-width="1.1" fill="none"/><text x="531" y="92" font-size="10" fill="#f2f2f2">S111</text><text x="531" y="268" font-size="10" fill="#f2f2f2">S111</text><text x="1097" y="68" font-size="10" fill="#f2f2f2">S113</text><text x="1104" y="289" font-size="10" fill="#f2f2f2">S113</text><text x="1023" y="90" font-size="11" fill="#f6e8d8">P Re</text><path d="M1021 86H1012M1014.5 83.5L1011.5 86L1014.5 88.5" stroke="#f6e8d8" stroke-width="1.1" fill="none"/><path d="M1026 95L1024 98L1022 93L1020 98L1018 95H1016" stroke="#fff" stroke-width="1.3" fill="none"/><path d="M1016 92L1012 95.5L1016 99Z" fill="#fff"/><text x="1093" y="143" font-size="11" fill="#f6e8d8">H Re</text><path d="M1091 139H1082M1084.5 136.5L1081.5 139L1084.5 141.5" stroke="#f6e8d8" stroke-width="1.1" fill="none"/><path d="M1096 148L1094 151L1092 146L1090 151L1088 148H1086" stroke="#fff" stroke-width="1.3" fill="none"/><path d="M1086 145L1082 148.5L1086 152Z" fill="#fff"/><text x="661" y="182" font-size="11" fill="#f0f0f0">Wi</text><path d="M677 178H687M684.5 175.5L687.5 178L684.5 180.5" stroke="#f0f0f0" stroke-width="1.1" fill="none"/><path d="M687 177L689 180L691 175L693 180L695 177H697" stroke="#fff" stroke-width="1.3" fill="none"/><path d="M697 174L701 177.5L697 181Z" fill="#fff"/><path d="M686 201L688 204L690 199L692 204L694 201H696" stroke="#fff" stroke-width="1.3" fill="none"/><path d="M696 198L700 201.5L696 205Z" fill="#fff"/><text x="665" y="220" font-size="11" fill="#f0f0f0">H Li</text><path d="M687 217H697M694.5 214.5L697.5 217L694.5 219.5" stroke="#f0f0f0" stroke-width="1.1" fill="none"/><path d="M686 254L688 257L690 252L692 257L694 254H696" stroke="#fff" stroke-width="1.3" fill="none"/><path d="M696 251L700 254.5L696 258Z" fill="#fff"/><text x="665" y="271" font-size="11" fill="#f0f0f0">P Li</text><path d="M686 268H696M693.5 265.5L696.5 268L693.5 270.5" stroke="#f0f0f0" stroke-width="1.1" fill="none"/></svg><div class="a" style="left:11px;top:312px;width:20px;height:88px;background:#24292c;border-radius:3px"></div><svg class="a" style="left:15px;top:316px" width="12" height="11"><path d="M11 5.5H1.5M6 1L1.5 5.5L6 10" stroke="#e0700c" stroke-width="1.8" fill="none"/></svg><div class="t" style="left:15px;top:358px;font-size:11px;font-weight:bold;color:#e0700c;transform:rotate(-90deg);transform-origin:0 0">P Re</div><div class="a" style="left:16px;top:375px;width:10px;height:10px;border-radius:50%;background:#14b0f0"></div><div class="a" style="left:11px;top:406px;width:20px;height:88px;background:#24292c;border-radius:3px"></div><svg class="a" style="left:15px;top:410px" width="12" height="11"><path d="M11 5.5H1.5M6 1L1.5 5.5L6 10" stroke="#e0700c" stroke-width="1.8" fill="none"/></svg><div class="t" style="left:15px;top:453px;font-size:11px;font-weight:bold;color:#e0700c;transform:rotate(-90deg);transform-origin:0 0">H Re</div><div class="a" style="left:11px;top:499px;width:20px;height:88px;background:#24292c;border-radius:3px"></div><svg class="a" style="left:15px;top:503px" width="12" height="11"><path d="M1 5.5H10.5M6 1L10.5 5.5L6 10" stroke="#f0f0f0" stroke-width="1.8" fill="none"/></svg><div class="t" style="left:15px;top:532px;font-size:11px;font-weight:bold;color:#f0f0f0;transform:rotate(-90deg);transform-origin:0 0">Wi</div><div class="a" style="left:16px;top:573px;width:11px;height:11px;background:#8a8a8a"></div><div class="a" style="left:17.5px;top:574.5px;width:8px;height:8px;background:#2fb81c"></div><div class="a" style="left:11px;top:592px;width:20px;height:88px;background:#24292c;border-radius:3px"></div><svg class="a" style="left:15px;top:596px" width="12" height="11"><path d="M1 5.5H10.5M6 1L10.5 5.5L6 10" stroke="#f0f0f0" stroke-width="1.8" fill="none"/></svg><div class="t" style="left:15px;top:633px;font-size:11px;font-weight:bold;color:#f0f0f0;transform:rotate(-90deg);transform-origin:0 0">H Li</div><div class="a" style="left:11px;top:779px;width:20px;height:89px;background:#24292c;border-radius:3px"></div><div class="t" style="left:15px;top:807px;font-size:11px;font-weight:bold;color:#f0f0f0;transform:rotate(-90deg);transform-origin:0 0">DGB</div><div class="a" style="left:33px;top:309px;width:520px;height:560px;background:linear-gradient(#2b3133,#363d40);border-radius:5px"></div><div class="a" style="left:11px;top:686px;width:23px;height:90px;background:linear-gradient(90deg,#7b8488,#525b5f 70%,#3c4447);border-radius:3px 0 0 3px"></div><svg class="a" style="left:15px;top:690px" width="12" height="11"><path d="M1 5.5H10.5M6 1L10.5 5.5L6 10" stroke="#f0f0f0" stroke-width="1.8" fill="none"/></svg><div class="t" style="left:15px;top:725px;font-size:11px;font-weight:bold;color:#f0f0f0;transform:rotate(-90deg);transform-origin:0 0">P Li</div><div class="a" style="left:16px;top:748px;width:10px;height:10px;border-radius:50%;background:#14b0f0"></div><div class="a" style="left:16px;top:762px;width:11px;height:11px;background:#8a8a8a"></div><div class="a" style="left:17.5px;top:763.5px;width:8px;height:8px;background:#2fb81c"></div><div class="a" style="left:42px;top:316px;width:238px;height:546px;background:#4d5659;border-top:2px solid #000;border-bottom:3px solid #000"></div><div class="a" style="left:42px;top:318px;width:238px;height:19px;background:linear-gradient(#566064,#4a5357)"></div><svg class="a" style="left:51px;top:323px" width="6" height="8"><path d="M0 0L5.5 4L0 8Z" fill="#f0f0f0"/></svg><div class="t" style="left:63px;top:323px;font-size:11px;font-weight:bold;color:#f2f2f2">Buis</div><div class="a" style="left:42px;top:339px;width:238px;height:18px;background:linear-gradient(#566064,#4a5357)"></div><svg class="a" style="left:51px;top:344px" width="6" height="8"><path d="M0 0L5.5 4L0 8Z" fill="#f0f0f0"/></svg><div class="t" style="left:63px;top:344px;font-size:11px;font-weight:bold;color:#f2f2f2">Vluchtweg</div><div class="a" style="left:42px;top:360px;width:238px;height:18px;background:linear-gradient(#566064,#4a5357)"></div><svg class="a" style="left:51px;top:365px" width="6" height="8"><path d="M0 0L5.5 4L0 8Z" fill="#f0f0f0"/></svg><div class="t" style="left:63px;top:365px;font-size:11px;font-weight:bold;color:#f2f2f2">Tunnel</div><div class="a" style="left:42px;top:380px;width:238px;height:18px;background:linear-gradient(#566064,#4a5357)"></div><svg class="a" style="left:49px;top:387px" width="9" height="6"><path d="M0 0H9L4.5 5.5Z" fill="#f0f0f0"/></svg><div class="t" style="left:63px;top:385px;font-size:11px;font-weight:bold;color:#f2f2f2">Verkeer</div><div class="a" style="left:42px;top:337px;width:238px;height:2px;background:#000"></div><div class="a" style="left:42px;top:357px;width:238px;height:3px;background:#000"></div><div class="a" style="left:42px;top:378px;width:238px;height:2px;background:#000"></div><div class="a" style="left:133px;top:345px;width:9px;height:9px;border-radius:50%;background:#14b0f0"></div><div class="a" style="left:42px;top:398px;width:238px;height:19px;background:#c8a24b"></div><div class="a" style="left:111px;top:402px;width:10px;height:11px;background:#7a7a6a"></div><div class="a" style="left:112.5px;top:403.5px;width:7.5px;height:8px;background:#30b01a"></div><div class="t" style="left:122px;top:403px;font-size:11px;color:#111">VRI, Afsluitboom</div><div class="a" style="left:42px;top:417px;width:238px;height:18px;background:#4f585c"></div><div class="t" style="left:122px;top:422px;font-size:11px;color:#eee">CaDo, Dienstweg</div><div class="a" style="left:42px;top:435px;width:238px;height:3px;background:#000"></div><div class="a" style="left:42px;top:438px;width:238px;height:18px;background:linear-gradient(#566064,#4a5357)"></div><svg class="a" style="left:51px;top:443px" width="6" height="8"><path d="M0 0L5.5 4L0 8Z" fill="#f0f0f0"/></svg><div class="t" style="left:63px;top:443px;font-size:11px;font-weight:bold;color:#f2f2f2">Detecties</div><div class="a" style="left:42px;top:456px;width:238px;height:3px;background:#000"></div><div class="a" style="left:42px;top:459px;width:238px;height:18px;background:linear-gradient(#566064,#4d5659)"></div><svg class="a" style="left:51px;top:464px" width="6" height="8"><path d="M0 0L5.5 4L0 8Z" fill="#f0f0f0"/></svg><div class="t" style="left:63px;top:464px;font-size:11px;font-weight:bold;color:#f2f2f2">Overig</div><div class="a" style="left:289px;top:316px;width:256px;height:546px;background:#4d5659;border-top:4px solid #000;border-bottom:3px solid #000"></div><div class="a" style="left:289px;top:320px;width:256px;height:20px;background:linear-gradient(#535c60,#485155)"></div><div class="a" style="left:289px;top:339px;width:256px;height:2px;background:#111"></div><div class="t" style="left:293px;top:325px;font-size:11px;color:#f0f0f0">RijbaanAfsluiterCoordinator PLi</div><div class="a" style="left:526px;top:321px;width:18px;height:17px;background:linear-gradient(#6a7377,#4a5256);border:1px solid #2a3033"></div><div class="t" style="left:529px;top:323px;font-size:13px;color:#e8e8e8;font-family:'Liberation Serif'">X</div><div class="a" style="left:289px;top:341px;width:256px;height:18px;background:linear-gradient(#525b5f,#4a5357);border-top:1px solid #5b6468"></div><svg class="a" style="left:301px;top:346px" width="6" height="8"><path d="M0 0L5.5 4L0 8Z" fill="#f4f4f4"/></svg><div class="t" style="left:311px;top:346px;font-size:11px;color:#f0f0f0">PLi</div><div class="a" style="left:289px;top:360px;width:256px;height:19px;background:#c8a24b;border-top:1px solid #5b6468"></div><svg class="a" style="left:301px;top:365px" width="6" height="8"><path d="M0 0L5.5 4L0 8Z" fill="#f4f4f4"/></svg><div class="t" style="left:311px;top:365px;font-size:11px;color:#111">PLi s112</div><div class="a" style="left:506px;top:365px;width:11px;height:10px;background:#8a8a6a"></div><div class="a" style="left:507.5px;top:366.5px;width:8px;height:7px;background:#30b01a"></div><div class="a" style="left:289px;top:379px;width:256px;height:19px;background:linear-gradient(#525b5f,#4a5357);border-top:1px solid #5b6468"></div><svg class="a" style="left:299px;top:386px" width="9" height="6"><path d="M0 0H9L4.5 5.5Z" fill="#f4f4f4"/></svg><div class="t" style="left:311px;top:384px;font-size:11px;color:#f0f0f0">PLi s113</div><div class="a" style="left:289px;top:398px;width:256px;height:19px;background:linear-gradient(#525b5f,#4a5357);border-top:1px solid #5b6468"></div><svg class="a" style="left:305px;top:403px" width="6" height="8"><path d="M0 0L5.5 4L0 8Z" fill="#f4f4f4"/></svg><div class="t" style="left:315px;top:403px;font-size:11px;color:#f0f0f0">Verkeerslichten</div><div class="a" style="left:415px;top:401px;width:61px;height:12px;background:#606a6e;border-radius:3px"></div><div class="a" style="left:415px;top:401px;width:30px;height:12px;background:#d0a54a;border-radius:3px 0 0 3px"></div><div class="t" style="left:420px;top:403.5px;font-size:7px;color:#222">AUTO</div><svg class="a" style="left:456px;top:401px" width="10" height="12"><path d="M3 1V7L1.5 6L1 7.5L4 11H8.5L9.5 8V5.5H5V1Z" fill="#fff" stroke="#111" stroke-width="0.8"/></svg><div class="a" style="left:289px;top:417px;width:256px;height:18px;background:linear-gradient(#525b5f,#4a5357);border-top:1px solid #5b6468"></div><svg class="a" style="left:303px;top:424px" width="9" height="6"><path d="M0 0H9L4.5 5.5Z" fill="#f4f4f4"/></svg><div class="t" style="left:315px;top:422px;font-size:11px;color:#f0f0f0">ASB PLi S113</div><div class="a" style="left:289px;top:435px;width:256px;height:19px;background:linear-gradient(#525b5f,#4a5357);border-top:1px solid #5b6468"></div><svg class="a" style="left:307px;top:442px" width="9" height="6"><path d="M0 0H9L4.5 5.5Z" fill="#f4f4f4"/></svg><div class="t" style="left:319px;top:440px;font-size:11px;color:#f0f0f0">ASB PLi S113</div><div class="a" style="left:415px;top:438px;width:61px;height:12px;background:#606a6e;border-radius:3px"></div><div class="a" style="left:415px;top:438px;width:30px;height:12px;background:#d0a54a;border-radius:3px 0 0 3px"></div><div class="t" style="left:420px;top:440.5px;font-size:7px;color:#222">AUTO</div><svg class="a" style="left:456px;top:438px" width="10" height="12"><path d="M3 1V7L1.5 6L1 7.5L4 11H8.5L9.5 8V5.5H5V1Z" fill="#fff" stroke="#111" stroke-width="0.8"/></svg><svg class="a" style="left:514px;top:438px" width="8" height="7"><path d="M1 4L3 6L7 1" stroke="#e8e8e8" stroke-width="1.3" fill="none"/></svg><div class="a" style="left:289px;top:454px;width:256px;height:37px;background:#4d5659;border-top:1px solid #5b6468"></div><div class="t" style="left:323px;top:459px;font-size:11px;color:#f0f0f0">Stand</div><div class="t" style="left:498px;top:459px;font-size:11px;color:#7e878a">Op</div><svg class="a" style="left:515px;top:462px" width="7" height="5"><path d="M0 0H7L3.5 4Z" fill="#7e878a"/></svg><div class="a" style="left:385.5px;top:475px;width:130px;height:13px;background:linear-gradient(#b0b0b0,#9a9a9a);border:1px solid #222;border-radius:2px;box-shadow:0 1px 1px rgba(0,0,0,.5)"></div><div class="t" style="left:385.5px;width:130px;text-align:center;top:477px;font-size:10px;color:#111">Stop</div><div class="a" style="left:289px;top:491px;width:256px;height:18px;border-top:1px solid #5b6468"></div><div class="t" style="left:323px;top:496px;font-size:11px;color:#f0f0f0">Beweging</div><div class="t" style="left:400px;width:127px;text-align:right;top:496px;font-size:11px;color:#f0f0f0">Geen</div><div class="a" style="left:289px;top:509px;width:256px;height:19px;border-top:1px solid #5b6468"></div><div class="t" style="left:323px;top:514px;font-size:11px;color:#f0f0f0">Geblokkeerd door VRI</div><div class="t" style="left:400px;width:127px;text-align:right;top:514px;font-size:11px;color:#f0f0f0">Ja</div><div class="a" style="left:289px;top:528px;width:256px;height:19px;border-top:1px solid #5b6468"></div><div class="t" style="left:323px;top:533px;font-size:11px;color:#f0f0f0">Obstakel gedetecteerd</div><div class="t" style="left:400px;width:127px;text-align:right;top:533px;font-size:11px;color:#f0f0f0">Nee</div><div class="a" style="left:289px;top:547px;width:256px;height:1px;background:#5b6468"></div><div class="a" style="left:561px;top:310px;width:796px;height:169px;background:linear-gradient(#2d3336,#363d40 60%,#3b4346);border-radius:5px"></div><div class="t" style="left:570px;top:335px;font-size:11px;color:#e6e6e6">Onbevestigde meldingen</div><div class="a" style="left:1127px;top:319px;width:28px;height:28px;background:linear-gradient(#8c9599,#4c555a);box-shadow:0 1px 1px rgba(0,0,0,.6);border-radius:3px 0 0 3px"></div><div class="a" style="left:1156px;top:319px;width:28px;height:28px;background:linear-gradient(#8c9599,#4c555a);box-shadow:0 1px 1px rgba(0,0,0,.6)"></div><div class="a" style="left:1185px;top:319px;width:28px;height:28px;background:linear-gradient(#8c9599,#4c555a);box-shadow:0 1px 1px rgba(0,0,0,.6);border-radius:0 3px 3px 0"></div><svg class="a" style="left:1137px;top:327px" width="12" height="11"><path d="M1 6L4 10L11 1" stroke="#eee" stroke-width="2" fill="none"/></svg><svg class="a" style="left:1160px;top:327px" width="20" height="11"><path d="M1 5L3.5 8.5L9 1" stroke="#eee" stroke-width="1.8" fill="none"/><path d="M8 5H19L17.5 9H8Z" fill="#ccc"/></svg><svg class="a" style="left:1195px;top:324px" width="9" height="16"><path d="M1 3L3 5L8 1M1 8L3 10L8 6M1 13L3 15L8 11" stroke="#eee" stroke-width="1.4" fill="none"/></svg><div class="a" style="left:1218px;top:319px;width:29px;height:29px;background:linear-gradient(#8c9599,#4c555a);box-shadow:0 1px 1px rgba(0,0,0,.6);border-radius:3px"></div><svg class="a" style="left:1221px;top:326px" width="23" height="8"><path d="M0 1H23" stroke="#eee" stroke-width="1.5"/><path d="M5 2H10V5H6ZM13 2H18L17 5H13Z" fill="#aaa"/></svg><div class="t" style="left:1222px;top:334px;font-size:9.5px;font-weight:bold;color:#fff">Cnd.</div><div class="a" style="left:1252px;top:319px;width:28px;height:28px;background:linear-gradient(#8c9599,#4c555a);box-shadow:0 1px 1px rgba(0,0,0,.6);border-radius:3px"></div><div class="a" style="left:1259px;top:322px;width:14px;height:9px;border:1.5px solid #7cc8f0"></div><div class="t" style="left:1255px;top:334px;font-size:9.5px;font-weight:bold;color:#fff">Toon</div><div class="a" style="left:1286px;top:319px;width:27px;height:28px;background:linear-gradient(#8c9599,#4c555a);box-shadow:0 1px 1px rgba(0,0,0,.6);border-radius:3px"></div><div class="t" style="left:1290px;top:328px;font-size:9px;color:#eee;font-family:'Liberation Serif'">abc</div><div class="a" style="left:1305px;top:325px;width:1.2px;height:14px;background:#eee"></div><div class="a" style="left:1318px;top:318px;width:29px;height:30px;background:linear-gradient(#8c9599,#4c555a);box-shadow:0 1px 1px rgba(0,0,0,.6);border-radius:3px"></div><svg class="a" style="left:1321px;top:323px" width="22" height="19"><path d="M1 1.5H21M3 4.5H19M3 7.5H19" stroke="#eee" stroke-width="1.3"/><path d="M4 11H18L11 17Z" fill="#fff"/></svg><div class="a" style="left:570px;top:353px;width:778px;height:120px;background:#000"></div><div class="a" style="left:570px;top:356.5px;width:778px;height:13.5px;background:linear-gradient(#535c60,#4a5357)"></div><div class="t" style="left:591px;top:358px;font-size:11px;font-weight:bold;color:#f2f2f2">Cam</div><div class="t" style="left:632px;top:358px;font-size:11px;font-weight:bold;color:#f2f2f2">Tijdstip</div><div class="t" style="left:739px;top:358px;font-size:11px;font-weight:bold;color:#f2f2f2">Locatie</div><div class="t" style="left:847px;top:358px;font-size:11px;font-weight:bold;color:#f2f2f2">Melding</div><div class="t" style="left:1147px;top:358px;font-size:11px;font-weight:bold;color:#f2f2f2">Notitie</div><div class="a" style="left:570px;top:372px;width:778px;height:19px;background:#c8a44a"></div><div class="a" style="left:572.5px;top:376.5px;width:9px;height:9px;border-radius:50%;background:#14b0f0"></div><div class="t" style="left:593px;top:376px;font-size:11px;color:#111">7</div><div class="t" style="left:633px;top:376px;font-size:11px;color:#111">08-10-20 15:34:45</div><div class="t" style="left:739px;top:376px;font-size:11px;color:#111">A9y-8,7</div><div class="t" style="left:847px;top:376px;font-size:11px;color:#111">VD PLi 16: Open</div><div class="a" style="left:570px;top:391px;width:778px;height:19px;background:#4a5357"></div><div class="a" style="left:632px;top:391px;width:107px;height:19px;background:#566064"></div><div class="a" style="left:570px;top:410.5px;width:778px;height:19.5px;background:#4a5357"></div><div class="a" style="left:632px;top:410.5px;width:107px;height:19.5px;background:#566064"></div><div class="a" style="left:570px;top:430.5px;width:778px;height:18.5px;background:#4a5357"></div><div class="a" style="left:632px;top:430.5px;width:107px;height:18.5px;background:#566064"></div><div class="a" style="left:570px;top:449.5px;width:778px;height:21.19999999999999px;background:#4a5357"></div><div class="a" style="left:632px;top:449.5px;width:107px;height:21.19999999999999px;background:#566064"></div><div class="a" style="left:570px;top:410px;width:778px;height:1px;background:#3c4448"></div><div class="a" style="left:570px;top:430px;width:778px;height:1px;background:#3c4448"></div><div class="a" style="left:570px;top:449px;width:778px;height:1px;background:#3c4448"></div><div class="a" style="left:561px;top:488px;width:796px;height:357px;background:#30373a"></div><div class="a" style="left:562px;top:489px;width:62px;height:31px;background:#41494c;border:1px solid #959b9d"></div><svg class="a" style="left:566px;top:496px" width="55" height="16"><path d="M5 1.5A2 2 0 0 1 9 1.5V7A2 2 0 0 1 5 7Z" fill="#eee"/><path d="M3.5 6A3.5 3.5 0 0 0 10.5 6M7 9.5V13M4.5 13H9.5" stroke="#eee" stroke-width="1" fill="none"/><path d="M28 13C24 13 23 10 24.5 7C25 9 26 9 26 8C26 5 28 4 28 1C31 4 33 7 32 10C31.5 12 30 13 28 13Z" fill="#eee"/><circle cx="47" cy="8" r="6" fill="none" stroke="#ddd" stroke-width="1.3"/><path d="M43.5 5.5H50.5L47 11.5Z" fill="none" stroke="#ddd" stroke-width="1.1"/></svg><div class="a" style="left:588px;top:521px;width:60px;height:57px;background:#3e4548"></div><svg class="a" style="left:594px;top:530px" width="12" height="12"><path d="M1 4H4L8 1V11L4 8H1Z" fill="#7d8386"/></svg><svg class="a" style="left:615px;top:530px" width="10" height="14"><path d="M4.5 0.5C7 0.5 8.5 2.3 8.5 4.3C8.5 6 7 7 6 8.5V10H3V8.5C2 7 0.5 6 0.5 4.3C0.5 2.3 2 0.5 4.5 0.5Z" fill="#f4f4f4"/><path d="M3 10.5H6L5 12H4Z" fill="#f4f4f4"/></svg><div class="t" style="left:629px;top:532px;font-size:8.5px;font-weight:bold;color:#f0f0f0">5</div><div class="t" style="left:592px;top:558px;font-size:8.5px;letter-spacing:-0.4px;font-weight:bold;color:#6f7679">RDS</div><svg class="a" style="left:613px;top:557px" width="16" height="12"><path d="M1 5.5L3 8L5 3L7.5 8.5L9.5 5.5H11" stroke="#fff" stroke-width="1.5" fill="none"/><path d="M10.5 2L14.5 6L10.5 10Z" fill="#fff"/></svg><div class="t" style="left:629px;top:559px;font-size:8.5px;font-weight:bold;color:#f0f0f0">0</div><div class="a" style="left:588px;top:581px;width:60px;height:59px;background:#3e4548"></div><svg class="a" style="left:594px;top:590px" width="12" height="12"><path d="M1 4H4L8 1V11L4 8H1Z" fill="#7d8386"/></svg><svg class="a" style="left:615px;top:590px" width="10" height="14"><path d="M4.5 0.5C7 0.5 8.5 2.3 8.5 4.3C8.5 6 7 7 6 8.5V10H3V8.5C2 7 0.5 6 0.5 4.3C0.5 2.3 2 0.5 4.5 0.5Z" fill="#f4f4f4"/><path d="M3 10.5H6L5 12H4Z" fill="#f4f4f4"/></svg><div class="t" style="left:629px;top:592px;font-size:8.5px;font-weight:bold;color:#f0f0f0">5</div><div class="t" style="left:592px;top:618px;font-size:8.5px;letter-spacing:-0.4px;font-weight:bold;color:#6f7679">RDS</div><svg class="a" style="left:613px;top:617px" width="16" height="12"><path d="M1 5.5L3 8L5 3L7.5 8.5L9.5 5.5H11" stroke="#fff" stroke-width="1.5" fill="none"/><path d="M10.5 2L14.5 6L10.5 10Z" fill="#fff"/></svg><div class="t" style="left:629px;top:619px;font-size:8.5px;font-weight:bold;color:#f0f0f0">0</div><div class="a" style="left:588px;top:644px;width:60px;height:59px;background:#3e4548"></div><svg class="a" style="left:594px;top:653px" width="12" height="12"><path d="M1 4H4L8 1V11L4 8H1Z" fill="#7d8386"/></svg><svg class="a" style="left:615px;top:653px" width="10" height="14"><path d="M4.5 0.5C7 0.5 8.5 2.3 8.5 4.3C8.5 6 7 7 6 8.5V10H3V8.5C2 7 0.5 6 0.5 4.3C0.5 2.3 2 0.5 4.5 0.5Z" fill="#9a9a9a"/><path d="M3 10.5H6L5 12H4Z" fill="#9a9a9a"/></svg><svg class="a" style="left:592px;top:680px" width="13" height="13"><circle cx="6.5" cy="6.5" r="5.3" fill="none" stroke="#f0f0f0" stroke-width="1.6"/><circle cx="6.5" cy="6.5" r="1.6" fill="#f0f0f0"/><path d="M2 5.5L6.5 6.5L11 5.5M6.5 6.5V11.5" stroke="#f0f0f0" stroke-width="1.5"/></svg><div class="a" style="left:588px;top:707px;width:60px;height:60px;background:#3e4548"></div><svg class="a" style="left:594px;top:716px" width="12" height="12"><path d="M1 4H4L8 1V11L4 8H1Z" fill="#7d8386"/></svg><svg class="a" style="left:615px;top:716px" width="10" height="14"><path d="M4.5 0.5C7 0.5 8.5 2.3 8.5 4.3C8.5 6 7 7 6 8.5V10H3V8.5C2 7 0.5 6 0.5 4.3C0.5 2.3 2 0.5 4.5 0.5Z" fill="#f4f4f4"/><path d="M3 10.5H6L5 12H4Z" fill="#f4f4f4"/></svg><div class="t" style="left:629px;top:718px;font-size:8.5px;font-weight:bold;color:#f0f0f0">5</div><div class="t" style="left:592px;top:744px;font-size:8.5px;letter-spacing:-0.4px;font-weight:bold;color:#6f7679">RDS</div><svg class="a" style="left:613px;top:743px" width="16" height="12"><path d="M1 5.5L3 8L5 3L7.5 8.5L9.5 5.5H11" stroke="#fff" stroke-width="1.5" fill="none"/><path d="M10.5 2L14.5 6L10.5 10Z" fill="#fff"/></svg><div class="t" style="left:629px;top:745px;font-size:8.5px;font-weight:bold;color:#f0f0f0">0</div><div class="a" style="left:561px;top:647px;width:23px;height:40px;background:linear-gradient(#939da1,#5b6468);border-radius:3px;box-shadow:0 1px 1px rgba(0,0,0,.6)"></div><svg class="a" style="left:567px;top:661px" width="10" height="11"><path d="M8.5 1V10L1.5 5.5Z" fill="none" stroke="#111" stroke-width="1.3"/></svg><div class="a" style="left:598px;top:773px;width:40px;height:21px;background:linear-gradient(#8b9599,#5c6569);border-radius:3px;box-shadow:0 1px 1px rgba(0,0,0,.7)"></div><svg class="a" style="left:613px;top:779px" width="10" height="9"><path d="M5 1L9 8H1Z" fill="none" stroke="#111" stroke-width="1.4"/></svg><div class="a" style="left:598px;top:797px;width:40px;height:21px;background:linear-gradient(#4a5256,#383f42);border-radius:3px;box-shadow:0 1px 1px rgba(0,0,0,.6)"></div><svg class="a" style="left:613px;top:803px" width="10" height="9"><path d="M5 8L9 1H1Z" fill="none" stroke="#262b2d" stroke-width="1.2"/></svg><svg class="a" style="left:0;top:0" width="1366" height="879" font-family="Liberation Sans"><defs><clipPath id="mc"><rect x="659" y="488" width="698" height="357"/></clipPath></defs><g clip-path="url(#mc)"><rect x="659" y="488" width="698" height="332.5" fill="#918b8c"/><rect x="659" y="496.5" width="698" height="5" fill="#3b4144"/><rect x="659" y="521.5" width="698" height="2" fill="#b2acac"/><rect x="659" y="554" width="698" height="2" fill="#b2acac"/><rect x="659" y="645.5" width="698" height="2" fill="#b2acac"/><rect x="659" y="575" width="698" height="5.5" fill="#3b4144"/><rect x="659" y="665.5" width="698" height="25" fill="#3b4144"/><rect x="659" y="690.5" width="615" height="61.5" fill="#aba7a8"/><rect x="1274" y="690.5" width="83" height="61.5" fill="#918b8c"/><rect x="772.5" y="690" width="129.5" height="62" fill="#353b3d"/><text x="819.5" y="684" font-size="12" fill="#dcdcdc" letter-spacing="1.3">MTK Li</text><rect x="659" y="752" width="698" height="5.5" fill="#3b4144"/><rect x="676.5" y="690" width="41.200000000000045" height="4.5" fill="#3b4144"/><rect x="676.5" y="747.5" width="41.200000000000045" height="5" fill="#3b4144"/><rect x="907.7" y="690" width="40.59999999999991" height="4.5" fill="#3b4144"/><rect x="907.7" y="747.5" width="40.59999999999991" height="5" fill="#3b4144"/><rect x="1049" y="690" width="40" height="4.5" fill="#3b4144"/><rect x="1049" y="747.5" width="40" height="5" fill="#3b4144"/><rect x="1191" y="690" width="42" height="4.5" fill="#3b4144"/><rect x="1191" y="747.5" width="42" height="5" fill="#3b4144"/><rect x="763" y="690" width="10" height="4.5" fill="#353b3d"/><rect x="763" y="747.5" width="10" height="5" fill="#353b3d"/><rect x="671.5" y="675" width="4.5" height="15.5" fill="#56626a"/><rect x="714.7" y="721.5" width="50.09999999999991" height="1.6" fill="#c4c0c0"/><rect x="974.7" y="721.5" width="50.0" height="1.6" fill="#c4c0c0"/><rect x="1105" y="721.5" width="49.799999999999955" height="1.6" fill="#c4c0c0"/><rect x="1175" y="721.5" width="182" height="1.6" fill="#c4c0c0"/><path d="M1125 752L1172 723" stroke="#c4c0c0" stroke-width="1.4"/><rect x="714.7" y="612.5" width="31.299999999999955" height="1.5" fill="#b6b0b0"/><rect x="840" y="612.5" width="49" height="1.5" fill="#b6b0b0"/><rect x="958" y="612.5" width="72" height="1.5" fill="#b6b0b0"/><rect x="1100" y="612.5" width="75" height="1.5" fill="#b6b0b0"/><rect x="1200" y="612.5" width="55" height="1.5" fill="#b6b0b0"/><rect x="715" y="787.5" width="31" height="1.5" fill="#b6b0b0"/><rect x="845" y="787.5" width="44" height="1.5" fill="#b6b0b0"/><rect x="981" y="787.5" width="44" height="1.5" fill="#b6b0b0"/><rect x="1126" y="787.5" width="29" height="1.5" fill="#b6b0b0"/><rect x="1235" y="787.5" width="33" height="1.5" fill="#b6b0b0"/><path d="M672 595.5L674.5 598L672 600.5L669.5 598Z" fill="none" stroke="#6e6868" stroke-width="1"/><path d="M672 627.5L674.5 630L672 632.5L669.5 630Z" fill="none" stroke="#6e6868" stroke-width="1"/><path d="M672 650.5L674.5 653L672 655.5L669.5 653Z" fill="none" stroke="#6e6868" stroke-width="1"/><path d="M762.6 595.5L765.1 598L762.6 600.5L760.1 598Z" fill="none" stroke="#6e6868" stroke-width="1"/><path d="M762.6 627.5L765.1 630L762.6 632.5L760.1 630Z" fill="none" stroke="#6e6868" stroke-width="1"/><path d="M762.6 650.5L765.1 653L762.6 655.5L760.1 653Z" fill="none" stroke="#6e6868" stroke-width="1"/><path d="M862 595.5L864.5 598L862 600.5L859.5 598Z" fill="none" stroke="#6e6868" stroke-width="1"/><path d="M862 627.5L864.5 630L862 632.5L859.5 630Z" fill="none" stroke="#6e6868" stroke-width="1"/><path d="M862 650.5L864.5 653L862 655.5L859.5 653Z" fill="none" stroke="#6e6868" stroke-width="1"/><path d="M959 595.5L961.5 598L959 600.5L956.5 598Z" fill="none" stroke="#6e6868" stroke-width="1"/><path d="M959 627.5L961.5 630L959 632.5L956.5 630Z" fill="none" stroke="#6e6868" stroke-width="1"/><path d="M959 650.5L961.5 653L959 655.5L956.5 653Z" fill="none" stroke="#6e6868" stroke-width="1"/><path d="M1047 595.5L1049.5 598L1047 600.5L1044.5 598Z" fill="none" stroke="#6e6868" stroke-width="1"/><path d="M1047 627.5L1049.5 630L1047 632.5L1044.5 630Z" fill="none" stroke="#6e6868" stroke-width="1"/><path d="M1047 650.5L1049.5 653L1047 655.5L1044.5 653Z" fill="none" stroke="#6e6868" stroke-width="1"/><path d="M1144 595.5L1146.5 598L1144 600.5L1141.5 598Z" fill="none" stroke="#6e6868" stroke-width="1"/><path d="M1144 627.5L1146.5 630L1144 632.5L1141.5 630Z" fill="none" stroke="#6e6868" stroke-width="1"/><path d="M1144 650.5L1146.5 653L1144 655.5L1141.5 653Z" fill="none" stroke="#6e6868" stroke-width="1"/><path d="M1239 595.5L1241.5 598L1239 600.5L1236.5 598Z" fill="none" stroke="#6e6868" stroke-width="1"/><path d="M1239 627.5L1241.5 630L1239 632.5L1236.5 630Z" fill="none" stroke="#6e6868" stroke-width="1"/><path d="M1239 650.5L1241.5 653L1239 655.5L1236.5 653Z" fill="none" stroke="#6e6868" stroke-width="1"/><path d="M1336 595.5L1338.5 598L1336 600.5L1333.5 598Z" fill="none" stroke="#6e6868" stroke-width="1"/><path d="M1336 627.5L1338.5 630L1336 632.5L1333.5 630Z" fill="none" stroke="#6e6868" stroke-width="1"/><path d="M1336 650.5L1338.5 653L1336 655.5L1333.5 653Z" fill="none" stroke="#6e6868" stroke-width="1"/><path d="M672 770.5L674.5 773L672 775.5L669.5 773Z" fill="none" stroke="#6e6868" stroke-width="1"/><path d="M672 803.0L674.5 805.5L672 808.0L669.5 805.5Z" fill="none" stroke="#6e6868" stroke-width="1"/><path d="M769 770.5L771.5 773L769 775.5L766.5 773Z" fill="none" stroke="#6e6868" stroke-width="1"/><path d="M769 803.0L771.5 805.5L769 808.0L766.5 805.5Z" fill="none" stroke="#6e6868" stroke-width="1"/><path d="M867 770.5L869.5 773L867 775.5L864.5 773Z" fill="none" stroke="#6e6868" stroke-width="1"/><path d="M867 803.0L869.5 805.5L867 808.0L864.5 805.5Z" fill="none" stroke="#6e6868" stroke-width="1"/><path d="M957.5 770.5L960.0 773L957.5 775.5L955.0 773Z" fill="none" stroke="#6e6868" stroke-width="1"/><path d="M957.5 803.0L960.0 805.5L957.5 808.0L955.0 805.5Z" fill="none" stroke="#6e6868" stroke-width="1"/><path d="M1048.7 770.5L1051.2 773L1048.7 775.5L1046.2 773Z" fill="none" stroke="#6e6868" stroke-width="1"/><path d="M1048.7 803.0L1051.2 805.5L1048.7 808.0L1046.2 805.5Z" fill="none" stroke="#6e6868" stroke-width="1"/><path d="M1146 770.5L1148.5 773L1146 775.5L1143.5 773Z" fill="none" stroke="#6e6868" stroke-width="1"/><path d="M1146 803.0L1148.5 805.5L1146 808.0L1143.5 805.5Z" fill="none" stroke="#6e6868" stroke-width="1"/><path d="M1238.6 770.5L1241.1 773L1238.6 775.5L1236.1 773Z" fill="none" stroke="#6e6868" stroke-width="1"/><path d="M1238.6 803.0L1241.1 805.5L1238.6 808.0L1236.1 805.5Z" fill="none" stroke="#6e6868" stroke-width="1"/><path d="M1336.3 770.5L1338.8 773L1336.3 775.5L1333.8 773Z" fill="none" stroke="#6e6868" stroke-width="1"/><path d="M1336.3 803.0L1338.8 805.5L1336.3 808.0L1333.8 805.5Z" fill="none" stroke="#6e6868" stroke-width="1"/><path d="M681.4 705.3L683.9 707.8L681.4 710.3L678.9 707.8Z" fill="none" stroke="#6e6868" stroke-width="1"/><path d="M681.4 728.1L683.9 730.6L681.4 733.1L678.9 730.6Z" fill="none" stroke="#6e6868" stroke-width="1"/><path d="M681.4 740.8L683.9 743.3L681.4 745.8L678.9 743.3Z" fill="none" stroke="#6e6868" stroke-width="1"/><path d="M964 705.5L966.5 708L964 710.5L961.5 708Z" fill="none" stroke="#6e6868" stroke-width="1"/><path d="M964 737.5L966.5 740L964 742.5L961.5 740Z" fill="none" stroke="#6e6868" stroke-width="1"/><path d="M1060 705.5L1062.5 708L1060 710.5L1057.5 708Z" fill="none" stroke="#6e6868" stroke-width="1"/><path d="M1060 737.5L1062.5 740L1060 742.5L1057.5 740Z" fill="none" stroke="#6e6868" stroke-width="1"/><path d="M1156 705.5L1158.5 708L1156 710.5L1153.5 708Z" fill="none" stroke="#6e6868" stroke-width="1"/><path d="M1156 737.5L1158.5 740L1156 742.5L1153.5 740Z" fill="none" stroke="#6e6868" stroke-width="1"/><path d="M1251.6 705.5L1254.1 708L1251.6 710.5L1249.1 708Z" fill="none" stroke="#6e6868" stroke-width="1"/><path d="M1251.6 737.5L1254.1 740L1251.6 742.5L1249.1 740Z" fill="none" stroke="#6e6868" stroke-width="1"/><path d="M1339.4 705.5L1341.9 708L1339.4 710.5L1336.9 708Z" fill="none" stroke="#6e6868" stroke-width="1"/><path d="M1339.4 737.5L1341.9 740L1339.4 742.5L1336.9 740Z" fill="none" stroke="#6e6868" stroke-width="1"/><rect x="780.6" y="592" width="14" height="14" fill="none" stroke="#b4aeae" stroke-width="1.2"/><rect x="780.6" y="624.5" width="14" height="14" fill="none" stroke="#b4aeae" stroke-width="1.2"/><rect x="1313" y="766.7" width="14" height="14" fill="none" stroke="#b4aeae" stroke-width="1.2"/><rect x="1313" y="799" width="14" height="14" fill="none" stroke="#b4aeae" stroke-width="1.2"/><rect x="1313" y="701.3" width="14" height="14" fill="none" stroke="#b4aeae" stroke-width="1.2"/><path d="M676.3 611.3H699.8L693.3 620.8H676.3Z" fill="#56626a" stroke="#46525a" stroke-width="0.8"/><text x="679.3" y="619.8" font-size="9" fill="#8c979c">42</text><path d="M746 611.3H769.5L763 620.8H746Z" fill="#ffffff" stroke="#333" stroke-width="0.8"/><text x="749" y="619.8" font-size="9" fill="#111">41</text><path d="M816.4 611.3H839.9L833.4 620.8H816.4Z" fill="#ffffff" stroke="#333" stroke-width="0.8"/><text x="819.4" y="619.8" font-size="9" fill="#111">40</text><path d="M889.3 611.3H912.8L906.3 620.8H889.3Z" fill="#ffffff" stroke="#333" stroke-width="0.8"/><text x="892.3" y="619.8" font-size="9" fill="#111">39</text><path d="M958.8 611.3H982.3L975.8 620.8H958.8Z" fill="#56626a" stroke="#46525a" stroke-width="0.8"/><text x="961.8" y="619.8" font-size="9" fill="#8c979c">38</text><path d="M1030 611.3H1053.5L1047 620.8H1030Z" fill="#56626a" stroke="#46525a" stroke-width="0.8"/><text x="1033" y="619.8" font-size="9" fill="#8c979c">37</text><path d="M1100 611.3H1123.5L1117 620.8H1100Z" fill="#56626a" stroke="#46525a" stroke-width="0.8"/><text x="1103" y="619.8" font-size="9" fill="#8c979c">36</text><path d="M1175 611.3H1198.5L1192 620.8H1175Z" fill="#56626a" stroke="#46525a" stroke-width="0.8"/><text x="1178" y="619.8" font-size="9" fill="#8c979c">35</text><path d="M1255 611.3H1278.5L1272 620.8H1255Z" fill="#56626a" stroke="#46525a" stroke-width="0.8"/><text x="1258" y="619.8" font-size="9" fill="#8c979c">34</text><path d="M1336 611.3H1359.5L1353 620.8H1336Z" fill="#56626a" stroke="#46525a" stroke-width="0.8"/><text x="1339" y="619.8" font-size="9" fill="#8c979c">33</text><path d="M676.3 785.7H699.8L693.3 795.2H676.3Z" fill="#56626a" stroke="#46525a" stroke-width="0.8"/><text x="679.3" y="794.2" font-size="9" fill="#8c979c">42</text><path d="M746 785.7H769.5L763 795.2H746Z" fill="#56626a" stroke="#46525a" stroke-width="0.8"/><text x="749" y="794.2" font-size="9" fill="#8c979c">41</text><path d="M817.5 785.7H841.0L834.5 795.2H817.5Z" fill="#ffffff" stroke="#333" stroke-width="0.8"/><text x="820.5" y="794.2" font-size="9" fill="#111">40</text><path d="M889.3 785.7H912.8L906.3 795.2H889.3Z" fill="#ffffff" stroke="#333" stroke-width="0.8"/><text x="892.3" y="794.2" font-size="9" fill="#111">39</text><path d="M959.3 785.7H982.8L976.3 795.2H959.3Z" fill="#ffffff" stroke="#333" stroke-width="0.8"/><text x="962.3" y="794.2" font-size="9" fill="#111">37</text><path d="M1029 785.7H1052.5L1046 795.2H1029Z" fill="#56626a" stroke="#46525a" stroke-width="0.8"/><text x="1032" y="794.2" font-size="9" fill="#8c979c">35</text><path d="M1102 785.7H1125.5L1119 795.2H1102Z" fill="#56626a" stroke="#46525a" stroke-width="0.8"/><text x="1105" y="794.2" font-size="9" fill="#8c979c">33</text><path d="M1175 785.7H1198.5L1192 795.2H1175Z" fill="#56626a" stroke="#46525a" stroke-width="0.8"/><text x="1178" y="794.2" font-size="9" fill="#8c979c">31</text><path d="M1268.5 785.7H1292.0L1285.5 795.2H1268.5Z" fill="#56626a" stroke="#46525a" stroke-width="0.8"/><text x="1271.5" y="794.2" font-size="9" fill="#8c979c">29</text><path d="M1337.6 785.7H1361.1L1354.6 795.2H1337.6Z" fill="#56626a" stroke="#46525a" stroke-width="0.8"/><text x="1340.6" y="794.2" font-size="9" fill="#8c979c">28</text><path d="M1013 724.7H1036.5L1030 734.2H1013Z" fill="#56626a" stroke="#46525a" stroke-width="0.8"/><text x="1016" y="733.2" font-size="9" fill="#8c979c">205</text><path d="M1079 724.7H1102.5L1096 734.2H1079Z" fill="#56626a" stroke="#46525a" stroke-width="0.8"/><text x="1082" y="733.2" font-size="9" fill="#8c979c">204</text><path d="M1149 724.7H1172.5L1166 734.2H1149Z" fill="#56626a" stroke="#46525a" stroke-width="0.8"/><text x="1152" y="733.2" font-size="9" fill="#8c979c">203</text><path d="M1268.5 724.7H1292.0L1285.5 734.2H1268.5Z" fill="#56626a" stroke="#46525a" stroke-width="0.8"/><text x="1271.5" y="733.2" font-size="9" fill="#8c979c">202</text><path d="M1338 724.7H1361.5L1355 734.2H1338Z" fill="#56626a" stroke="#46525a" stroke-width="0.8"/><text x="1341" y="733.2" font-size="9" fill="#8c979c">201</text><text x="835" y="543" font-size="11" fill="#f0f0f0">Wi</text><text x="830" y="634" font-size="11" fill="#f0f0f0">HLi</text><text x="818" y="809.5" font-size="11" fill="#f0f0f0">PLi</text><text x="822.5" y="723.5" font-size="11" fill="#f0f0f0">S112</text><text x="1275" y="710" font-size="8.5" font-weight="bold" fill="#f4f4f4">5</text><text x="1297" y="710" font-size="8.5" font-weight="bold" fill="#f4f4f4">0/2</text><rect x="911" y="707" width="24" height="9" fill="#8f8f8f"/><rect x="913" y="708.5" width="20" height="6" fill="#30b81c"/><path d="M912 717H935L929 726H912Z" fill="#fff" stroke="#333" stroke-width="0.8"/><text x="913" y="724.5" font-size="8.5" fill="#111">206</text><path d="M938.5 714.5A1.8 1.8 0 0 1 942 714.5V720A1.8 1.8 0 0 1 938.5 720Z" fill="#eee"/><path d="M937 719A3.2 3.2 0 0 0 943.5 719M940.2 722V726M938 726H942.5" stroke="#eee" stroke-width="1" fill="none"/><rect x="985" y="687" width="15" height="8" fill="#8f8f8f"/><rect x="986.5" y="688.5" width="12" height="5" fill="#30b81c"/><rect x="986.8" y="695" width="9.8" height="23.5" rx="4.9" fill="#000"/><circle cx="991.7" cy="701" r="3.4" fill="#f01010"/><rect x="986.8" y="728" width="9.8" height="23" rx="4.9" fill="#000"/><circle cx="991.7" cy="734" r="3.4" fill="#f01010"/><rect x="1001.5" y="686" width="6.3" height="70" fill="#000"/><rect x="1003" y="687.5" width="3.3" height="67" fill="#d0d0d0"/><rect x="1003" y="687.5" width="3.3" height="6" fill="#b04848"/><rect x="1003" y="699.5" width="3.3" height="6" fill="#b04848"/><rect x="1003" y="711.5" width="3.3" height="6" fill="#b04848"/><rect x="1003" y="723.5" width="3.3" height="6" fill="#b04848"/><rect x="1003" y="735.5" width="3.3" height="6" fill="#b04848"/><rect x="1003" y="747.5" width="3.3" height="6" fill="#b04848"/><rect x="664.8" y="495.8" width="35.4" height="10.4" rx="5.2" fill="#5d6569" stroke="#26343a" stroke-width="1.6"/><text x="669" y="505" font-size="10.5" font-weight="bold" fill="#f4f4f4">A</text><path d="M681 496V504.5M678 501.5L681 505L684 501.5" stroke="#7e7272" stroke-width="1.4" fill="none"/><text x="687.5" y="504.5" font-size="9.5" fill="#f4f4f4">20</text><rect x="703" y="496" width="34.900000000000006" height="12" rx="6" fill="#26343a"/><circle cx="709.2" cy="502" r="4.6" fill="#465258"/><text x="709.2" y="505.3" font-size="8" font-weight="bold" fill="#f4f4f4" text-anchor="middle">B</text><circle cx="720.5" cy="502" r="4.6" fill="#465258"/><text x="720.5" y="505.3" font-size="8" font-weight="bold" fill="#f4f4f4" text-anchor="middle">H</text><circle cx="731.8000000000001" cy="502" r="4.6" fill="#465258"/><text x="731.8000000000001" y="505.3" font-size="8" font-weight="bold" fill="#f4f4f4" text-anchor="middle">N</text><rect x="741" y="496" width="34.900000000000006" height="12" rx="6" fill="#26343a"/><circle cx="747.2" cy="502" r="4.6" fill="#465258"/><text x="747.2" y="505.3" font-size="8" font-weight="bold" fill="#f4f4f4" text-anchor="middle">B</text><circle cx="758.5" cy="502" r="4.6" fill="#465258"/><text x="758.5" y="505.3" font-size="8" font-weight="bold" fill="#f4f4f4" text-anchor="middle">H</text><circle cx="769.8000000000001" cy="502" r="4.6" fill="#465258"/><text x="769.8000000000001" y="505.3" font-size="8" font-weight="bold" fill="#f4f4f4" text-anchor="middle">N</text><rect x="806.8" y="495.8" width="35.4" height="10.4" rx="5.2" fill="#5d6569" stroke="#26343a" stroke-width="1.6"/><text x="811" y="505" font-size="10.5" font-weight="bold" fill="#f4f4f4">A</text><path d="M823 496V504.5M820 501.5L823 505L826 501.5" stroke="#7e7272" stroke-width="1.4" fill="none"/><text x="829.5" y="504.5" font-size="9.5" fill="#f4f4f4">19</text><rect x="845" y="496" width="34.900000000000006" height="12" rx="6" fill="#26343a"/><circle cx="851.2" cy="502" r="4.6" fill="#465258"/><text x="851.2" y="505.3" font-size="8" font-weight="bold" fill="#f4f4f4" text-anchor="middle">B</text><circle cx="862.5" cy="502" r="4.6" fill="#465258"/><text x="862.5" y="505.3" font-size="8" font-weight="bold" fill="#f4f4f4" text-anchor="middle">H</text><circle cx="873.8000000000001" cy="502" r="4.6" fill="#465258"/><text x="873.8000000000001" y="505.3" font-size="8" font-weight="bold" fill="#f4f4f4" text-anchor="middle">N</text><rect x="883" y="496" width="34.900000000000006" height="12" rx="6" fill="#26343a"/><circle cx="889.2" cy="502" r="4.6" fill="#465258"/><text x="889.2" y="505.3" font-size="8" font-weight="bold" fill="#f4f4f4" text-anchor="middle">B</text><circle cx="900.5" cy="502" r="4.6" fill="#465258"/><text x="900.5" y="505.3" font-size="8" font-weight="bold" fill="#f4f4f4" text-anchor="middle">H</text><circle cx="911.8000000000001" cy="502" r="4.6" fill="#465258"/><text x="911.8000000000001" y="505.3" font-size="8" font-weight="bold" fill="#f4f4f4" text-anchor="middle">N</text><rect x="948.8" y="495.8" width="35.4" height="10.4" rx="5.2" fill="#5d6569" stroke="#26343a" stroke-width="1.6"/><text x="953" y="505" font-size="10.5" font-weight="bold" fill="#f4f4f4">A</text><path d="M965 496V504.5M962 501.5L965 505L968 501.5" stroke="#7e7272" stroke-width="1.4" fill="none"/><text x="971.5" y="504.5" font-size="9.5" fill="#f4f4f4">18</text><rect x="987" y="496" width="34.900000000000006" height="12" rx="6" fill="#26343a"/><circle cx="993.2" cy="502" r="4.6" fill="#465258"/><text x="993.2" y="505.3" font-size="8" font-weight="bold" fill="#f4f4f4" text-anchor="middle">B</text><circle cx="1004.5" cy="502" r="4.6" fill="#465258"/><text x="1004.5" y="505.3" font-size="8" font-weight="bold" fill="#f4f4f4" text-anchor="middle">H</text><circle cx="1015.8000000000001" cy="502" r="4.6" fill="#465258"/><text x="1015.8000000000001" y="505.3" font-size="8" font-weight="bold" fill="#f4f4f4" text-anchor="middle">N</text><rect x="1025" y="496" width="34.900000000000006" height="12" rx="6" fill="#26343a"/><circle cx="1031.2" cy="502" r="4.6" fill="#465258"/><text x="1031.2" y="505.3" font-size="8" font-weight="bold" fill="#f4f4f4" text-anchor="middle">B</text><circle cx="1042.5" cy="502" r="4.6" fill="#465258"/><text x="1042.5" y="505.3" font-size="8" font-weight="bold" fill="#f4f4f4" text-anchor="middle">H</text><circle cx="1053.8" cy="502" r="4.6" fill="#465258"/><text x="1053.8" y="505.3" font-size="8" font-weight="bold" fill="#f4f4f4" text-anchor="middle">N</text><rect x="1090.8" y="495.8" width="35.4" height="10.4" rx="5.2" fill="#5d6569" stroke="#26343a" stroke-width="1.6"/><text x="1095" y="505" font-size="10.5" font-weight="bold" fill="#f4f4f4">A</text><path d="M1107 496V504.5M1104 501.5L1107 505L1110 501.5" stroke="#7e7272" stroke-width="1.4" fill="none"/><text x="1113.5" y="504.5" font-size="9.5" fill="#f4f4f4">17</text><rect x="1129" y="496" width="34.900000000000006" height="12" rx="6" fill="#26343a"/><circle cx="1135.2" cy="502" r="4.6" fill="#465258"/><text x="1135.2" y="505.3" font-size="8" font-weight="bold" fill="#f4f4f4" text-anchor="middle">B</text><circle cx="1146.5" cy="502" r="4.6" fill="#465258"/><text x="1146.5" y="505.3" font-size="8" font-weight="bold" fill="#f4f4f4" text-anchor="middle">H</text><circle cx="1157.8" cy="502" r="4.6" fill="#465258"/><text x="1157.8" y="505.3" font-size="8" font-weight="bold" fill="#f4f4f4" text-anchor="middle">N</text><rect x="1167" y="496" width="34.900000000000006" height="12" rx="6" fill="#26343a"/><circle cx="1173.2" cy="502" r="4.6" fill="#465258"/><text x="1173.2" y="505.3" font-size="8" font-weight="bold" fill="#f4f4f4" text-anchor="middle">B</text><circle cx="1184.5" cy="502" r="4.6" fill="#465258"/><text x="1184.5" y="505.3" font-size="8" font-weight="bold" fill="#f4f4f4" text-anchor="middle">H</text><circle cx="1195.8" cy="502" r="4.6" fill="#465258"/><text x="1195.8" y="505.3" font-size="8" font-weight="bold" fill="#f4f4f4" text-anchor="middle">N</text><rect x="1233.8" y="495.8" width="35.4" height="10.4" rx="5.2" fill="#5d6569" stroke="#26343a" stroke-width="1.6"/><text x="1238" y="505" font-size="10.5" font-weight="bold" fill="#f4f4f4">A</text><path d="M1250 496V504.5M1247 501.5L1250 505L1253 501.5" stroke="#7e7272" stroke-width="1.4" fill="none"/><text x="1256.5" y="504.5" font-size="9.5" fill="#f4f4f4">16</text><rect x="1272" y="496" width="34.900000000000006" height="12" rx="6" fill="#26343a"/><circle cx="1278.2" cy="502" r="4.6" fill="#465258"/><text x="1278.2" y="505.3" font-size="8" font-weight="bold" fill="#f4f4f4" text-anchor="middle">B</text><circle cx="1289.5" cy="502" r="4.6" fill="#465258"/><text x="1289.5" y="505.3" font-size="8" font-weight="bold" fill="#f4f4f4" text-anchor="middle">H</text><circle cx="1300.8" cy="502" r="4.6" fill="#465258"/><text x="1300.8" y="505.3" font-size="8" font-weight="bold" fill="#f4f4f4" text-anchor="middle">N</text><rect x="1320" y="496" width="34.900000000000006" height="12" rx="6" fill="#26343a"/><circle cx="1326.2" cy="502" r="4.6" fill="#465258"/><text x="1326.2" y="505.3" font-size="8" font-weight="bold" fill="#f4f4f4" text-anchor="middle">B</text><circle cx="1337.5" cy="502" r="4.6" fill="#465258"/><text x="1337.5" y="505.3" font-size="8" font-weight="bold" fill="#f4f4f4" text-anchor="middle">H</text><circle cx="1348.8" cy="502" r="4.6" fill="#465258"/><text x="1348.8" y="505.3" font-size="8" font-weight="bold" fill="#f4f4f4" text-anchor="middle">N</text><rect x="664.8" y="573.3" width="35.4" height="10.4" rx="5.2" fill="#5d6569" stroke="#26343a" stroke-width="1.6"/><circle cx="674" cy="574.7" r="1.1" fill="#a8a8a8"/><path d="M673.5 576.0L671 579.5L669 582.5M671 579.5L674 581.5L673 583.5M673 576.5L676 578.5L677.5 577.5M672.5 576.5L669.5 577.5" stroke="#a8a8a8" stroke-width="1.1" fill="none"/><path d="M681 573.5V582.0M678 579.0L681 582.5L684 579.0" stroke="#7e7272" stroke-width="1.4" fill="none"/><text x="687.5" y="582.0" font-size="9.5" fill="#f4f4f4">20</text><rect x="703" y="576.5" width="23.6" height="12" rx="6" fill="#26343a"/><circle cx="709.2" cy="582.5" r="4.6" fill="#465258"/><text x="709.2" y="585.8" font-size="8" font-weight="bold" fill="#f4f4f4" text-anchor="middle">B</text><circle cx="720.5" cy="582.5" r="4.6" fill="#465258"/><text x="720.5" y="585.8" font-size="8" font-weight="bold" fill="#f4f4f4" text-anchor="middle">N</text><rect x="773" y="576.5" width="23.6" height="12" rx="6" fill="#26343a"/><circle cx="779.2" cy="582.5" r="4.6" fill="#465258"/><text x="779.2" y="585.8" font-size="8" font-weight="bold" fill="#f4f4f4" text-anchor="middle">B</text><circle cx="790.5" cy="582.5" r="4.6" fill="#465258"/><text x="790.5" y="585.8" font-size="8" font-weight="bold" fill="#f4f4f4" text-anchor="middle">N</text><rect x="806.8" y="573.3" width="35.4" height="10.4" rx="5.2" fill="#5d6569" stroke="#26343a" stroke-width="1.6"/><circle cx="816" cy="574.7" r="1.1" fill="#a8a8a8"/><path d="M815.5 576.0L813 579.5L811 582.5M813 579.5L816 581.5L815 583.5M815 576.5L818 578.5L819.5 577.5M814.5 576.5L811.5 577.5" stroke="#a8a8a8" stroke-width="1.1" fill="none"/><path d="M823 573.5V582.0M820 579.0L823 582.5L826 579.0" stroke="#7e7272" stroke-width="1.4" fill="none"/><text x="829.5" y="582.0" font-size="9.5" fill="#f4f4f4">19</text><rect x="845" y="576.5" width="23.6" height="12" rx="6" fill="#26343a"/><circle cx="851.2" cy="582.5" r="4.6" fill="#465258"/><text x="851.2" y="585.8" font-size="8" font-weight="bold" fill="#f4f4f4" text-anchor="middle">B</text><circle cx="862.5" cy="582.5" r="4.6" fill="#465258"/><text x="862.5" y="585.8" font-size="8" font-weight="bold" fill="#f4f4f4" text-anchor="middle">N</text><rect x="915" y="576.5" width="23.6" height="12" rx="6" fill="#26343a"/><circle cx="921.2" cy="582.5" r="4.6" fill="#465258"/><text x="921.2" y="585.8" font-size="8" font-weight="bold" fill="#f4f4f4" text-anchor="middle">B</text><circle cx="932.5" cy="582.5" r="4.6" fill="#465258"/><text x="932.5" y="585.8" font-size="8" font-weight="bold" fill="#f4f4f4" text-anchor="middle">N</text><rect x="948.8" y="573.3" width="35.4" height="10.4" rx="5.2" fill="#5d6569" stroke="#26343a" stroke-width="1.6"/><circle cx="958" cy="574.7" r="1.1" fill="#a8a8a8"/><path d="M957.5 576.0L955 579.5L953 582.5M955 579.5L958 581.5L957 583.5M957 576.5L960 578.5L961.5 577.5M956.5 576.5L953.5 577.5" stroke="#a8a8a8" stroke-width="1.1" fill="none"/><path d="M965 573.5V582.0M962 579.0L965 582.5L968 579.0" stroke="#7e7272" stroke-width="1.4" fill="none"/><text x="971.5" y="582.0" font-size="9.5" fill="#f4f4f4">18</text><rect x="987" y="576.5" width="23.6" height="12" rx="6" fill="#26343a"/><circle cx="993.2" cy="582.5" r="4.6" fill="#465258"/><text x="993.2" y="585.8" font-size="8" font-weight="bold" fill="#f4f4f4" text-anchor="middle">B</text><circle cx="1004.5" cy="582.5" r="4.6" fill="#465258"/><text x="1004.5" y="585.8" font-size="8" font-weight="bold" fill="#f4f4f4" text-anchor="middle">N</text><rect x="1057" y="576.5" width="23.6" height="12" rx="6" fill="#26343a"/><circle cx="1063.2" cy="582.5" r="4.6" fill="#465258"/><text x="1063.2" y="585.8" font-size="8" font-weight="bold" fill="#f4f4f4" text-anchor="middle">B</text><circle cx="1074.5" cy="582.5" r="4.6" fill="#465258"/><text x="1074.5" y="585.8" font-size="8" font-weight="bold" fill="#f4f4f4" text-anchor="middle">N</text><rect x="1090.8" y="573.3" width="35.4" height="10.4" rx="5.2" fill="#5d6569" stroke="#26343a" stroke-width="1.6"/><circle cx="1100" cy="574.7" r="1.1" fill="#a8a8a8"/><path d="M1099.5 576.0L1097 579.5L1095 582.5M1097 579.5L1100 581.5L1099 583.5M1099 576.5L1102 578.5L1103.5 577.5M1098.5 576.5L1095.5 577.5" stroke="#a8a8a8" stroke-width="1.1" fill="none"/><path d="M1107 573.5V582.0M1104 579.0L1107 582.5L1110 579.0" stroke="#7e7272" stroke-width="1.4" fill="none"/><text x="1113.5" y="582.0" font-size="9.5" fill="#f4f4f4">17</text><rect x="1129" y="576.5" width="23.6" height="12" rx="6" fill="#26343a"/><circle cx="1135.2" cy="582.5" r="4.6" fill="#465258"/><text x="1135.2" y="585.8" font-size="8" font-weight="bold" fill="#f4f4f4" text-anchor="middle">B</text><circle cx="1146.5" cy="582.5" r="4.6" fill="#465258"/><text x="1146.5" y="585.8" font-size="8" font-weight="bold" fill="#f4f4f4" text-anchor="middle">N</text><rect x="1199" y="576.5" width="23.6" height="12" rx="6" fill="#26343a"/><circle cx="1205.2" cy="582.5" r="4.6" fill="#465258"/><text x="1205.2" y="585.8" font-size="8" font-weight="bold" fill="#f4f4f4" text-anchor="middle">B</text><circle cx="1216.5" cy="582.5" r="4.6" fill="#465258"/><text x="1216.5" y="585.8" font-size="8" font-weight="bold" fill="#f4f4f4" text-anchor="middle">N</text><rect x="1233.8" y="573.3" width="35.4" height="10.4" rx="5.2" fill="#5d6569" stroke="#26343a" stroke-width="1.6"/><circle cx="1243" cy="574.7" r="1.1" fill="#a8a8a8"/><path d="M1242.5 576.0L1240 579.5L1238 582.5M1240 579.5L1243 581.5L1242 583.5M1242 576.5L1245 578.5L1246.5 577.5M1241.5 576.5L1238.5 577.5" stroke="#a8a8a8" stroke-width="1.1" fill="none"/><path d="M1250 573.5V582.0M1247 579.0L1250 582.5L1253 579.0" stroke="#7e7272" stroke-width="1.4" fill="none"/><text x="1256.5" y="582.0" font-size="9.5" fill="#f4f4f4">16</text><rect x="1272" y="576.5" width="23.6" height="12" rx="6" fill="#26343a"/><circle cx="1278.2" cy="582.5" r="4.6" fill="#465258"/><text x="1278.2" y="585.8" font-size="8" font-weight="bold" fill="#f4f4f4" text-anchor="middle">B</text><circle cx="1289.5" cy="582.5" r="4.6" fill="#465258"/><text x="1289.5" y="585.8" font-size="8" font-weight="bold" fill="#f4f4f4" text-anchor="middle">N</text><rect x="1281" y="576.5" width="23.6" height="12" rx="6" fill="#26343a"/><circle cx="1287.2" cy="582.5" r="4.6" fill="#465258"/><text x="1287.2" y="585.8" font-size="8" font-weight="bold" fill="#f4f4f4" text-anchor="middle">B</text><circle cx="1298.5" cy="582.5" r="4.6" fill="#465258"/><text x="1298.5" y="585.8" font-size="8" font-weight="bold" fill="#f4f4f4" text-anchor="middle">N</text><rect x="645" y="665" width="34.900000000000006" height="12" rx="6" fill="#26343a"/><circle cx="651.2" cy="671" r="4.6" fill="#465258"/><text x="651.2" y="674.3" font-size="8" font-weight="bold" fill="#f4f4f4" text-anchor="middle">B</text><circle cx="662.5" cy="671" r="4.6" fill="#465258"/><text x="662.5" y="674.3" font-size="8" font-weight="bold" fill="#f4f4f4" text-anchor="middle">H</text><circle cx="673.8000000000001" cy="671" r="4.6" fill="#465258"/><text x="673.8000000000001" y="674.3" font-size="8" font-weight="bold" fill="#f4f4f4" text-anchor="middle">N</text><rect x="680.8" y="662.8" width="35.4" height="10.4" rx="5.2" fill="#5d6569" stroke="#26343a" stroke-width="1.6"/><text x="685.5" y="672" font-size="10" fill="#f4f4f4">E</text><path d="M697 673V664.5M694 667.5L697 664L700 667.5" stroke="#7e7272" stroke-width="1.4" fill="none"/><text x="703.5" y="671.5" font-size="9.5" fill="#f4f4f4">03</text><rect x="719" y="665" width="34.900000000000006" height="12" rx="6" fill="#26343a"/><circle cx="725.2" cy="671" r="4.6" fill="#465258"/><text x="725.2" y="674.3" font-size="8" font-weight="bold" fill="#f4f4f4" text-anchor="middle">B</text><circle cx="736.5" cy="671" r="4.6" fill="#465258"/><text x="736.5" y="674.3" font-size="8" font-weight="bold" fill="#f4f4f4" text-anchor="middle">H</text><circle cx="747.8000000000001" cy="671" r="4.6" fill="#465258"/><text x="747.8000000000001" y="674.3" font-size="8" font-weight="bold" fill="#f4f4f4" text-anchor="middle">N</text><rect x="767.8" y="662.8" width="35.4" height="10.4" rx="5.2" fill="#5d6569" stroke="#26343a" stroke-width="1.6"/><circle cx="777" cy="664.2" r="1.1" fill="#a8a8a8"/><path d="M776.5 665.5L774 669L772 672M774 669L777 671L776 673M776 666L779 668L780.5 667M775.5 666L772.5 667" stroke="#a8a8a8" stroke-width="1.1" fill="none"/><path d="M784 663V671.5M781 668.5L784 672L787 668.5" stroke="#7e7272" stroke-width="1.4" fill="none"/><text x="790.5" y="671.5" font-size="9.5" fill="#f4f4f4">19</text><rect x="806" y="665" width="34.900000000000006" height="12" rx="6" fill="#26343a"/><circle cx="812.2" cy="671" r="4.6" fill="#465258"/><text x="812.2" y="674.3" font-size="8" font-weight="bold" fill="#f4f4f4" text-anchor="middle">B</text><circle cx="823.5" cy="671" r="4.6" fill="#465258"/><text x="823.5" y="674.3" font-size="8" font-weight="bold" fill="#f4f4f4" text-anchor="middle">H</text><circle cx="834.8000000000001" cy="671" r="4.6" fill="#465258"/><text x="834.8000000000001" y="674.3" font-size="8" font-weight="bold" fill="#f4f4f4" text-anchor="middle">N</text><rect x="845" y="665" width="34.900000000000006" height="12" rx="6" fill="#26343a"/><circle cx="851.2" cy="671" r="4.6" fill="#465258"/><text x="851.2" y="674.3" font-size="8" font-weight="bold" fill="#f4f4f4" text-anchor="middle">B</text><circle cx="862.5" cy="671" r="4.6" fill="#465258"/><text x="862.5" y="674.3" font-size="8" font-weight="bold" fill="#f4f4f4" text-anchor="middle">H</text><circle cx="873.8000000000001" cy="671" r="4.6" fill="#465258"/><text x="873.8000000000001" y="674.3" font-size="8" font-weight="bold" fill="#f4f4f4" text-anchor="middle">N</text><rect x="910.8" y="662.8" width="35.4" height="10.4" rx="5.2" fill="#5d6569" stroke="#26343a" stroke-width="1.6"/><circle cx="920" cy="664.2" r="1.1" fill="#a8a8a8"/><path d="M919.5 665.5L917 669L915 672M917 669L920 671L919 673M919 666L922 668L923.5 667M918.5 666L915.5 667" stroke="#a8a8a8" stroke-width="1.1" fill="none"/><path d="M927 663V671.5M924 668.5L927 672L930 668.5" stroke="#7e7272" stroke-width="1.4" fill="none"/><text x="933.5" y="671.5" font-size="9.5" fill="#f4f4f4">18</text><rect x="949" y="665" width="34.900000000000006" height="12" rx="6" fill="#26343a"/><circle cx="955.2" cy="671" r="4.6" fill="#465258"/><text x="955.2" y="674.3" font-size="8" font-weight="bold" fill="#f4f4f4" text-anchor="middle">B</text><circle cx="966.5" cy="671" r="4.6" fill="#465258"/><text x="966.5" y="674.3" font-size="8" font-weight="bold" fill="#f4f4f4" text-anchor="middle">H</text><circle cx="977.8000000000001" cy="671" r="4.6" fill="#465258"/><text x="977.8000000000001" y="674.3" font-size="8" font-weight="bold" fill="#f4f4f4" text-anchor="middle">N</text><rect x="988" y="665" width="34.900000000000006" height="12" rx="6" fill="#26343a"/><circle cx="994.2" cy="671" r="4.6" fill="#465258"/><text x="994.2" y="674.3" font-size="8" font-weight="bold" fill="#f4f4f4" text-anchor="middle">B</text><circle cx="1005.5" cy="671" r="4.6" fill="#465258"/><text x="1005.5" y="674.3" font-size="8" font-weight="bold" fill="#f4f4f4" text-anchor="middle">H</text><circle cx="1016.8000000000001" cy="671" r="4.6" fill="#465258"/><text x="1016.8000000000001" y="674.3" font-size="8" font-weight="bold" fill="#f4f4f4" text-anchor="middle">N</text><rect x="1051.8" y="662.8" width="35.4" height="10.4" rx="5.2" fill="#5d6569" stroke="#26343a" stroke-width="1.6"/><circle cx="1061" cy="664.2" r="1.1" fill="#a8a8a8"/><path d="M1060.5 665.5L1058 669L1056 672M1058 669L1061 671L1060 673M1060 666L1063 668L1064.5 667M1059.5 666L1056.5 667" stroke="#a8a8a8" stroke-width="1.1" fill="none"/><path d="M1068 663V671.5M1065 668.5L1068 672L1071 668.5" stroke="#7e7272" stroke-width="1.4" fill="none"/><text x="1074.5" y="671.5" font-size="9.5" fill="#f4f4f4">17</text><rect x="1090" y="665" width="34.900000000000006" height="12" rx="6" fill="#26343a"/><circle cx="1096.2" cy="671" r="4.6" fill="#465258"/><text x="1096.2" y="674.3" font-size="8" font-weight="bold" fill="#f4f4f4" text-anchor="middle">B</text><circle cx="1107.5" cy="671" r="4.6" fill="#465258"/><text x="1107.5" y="674.3" font-size="8" font-weight="bold" fill="#f4f4f4" text-anchor="middle">H</text><circle cx="1118.8" cy="671" r="4.6" fill="#465258"/><text x="1118.8" y="674.3" font-size="8" font-weight="bold" fill="#f4f4f4" text-anchor="middle">N</text><rect x="1129" y="665" width="34.900000000000006" height="12" rx="6" fill="#26343a"/><circle cx="1135.2" cy="671" r="4.6" fill="#465258"/><text x="1135.2" y="674.3" font-size="8" font-weight="bold" fill="#f4f4f4" text-anchor="middle">B</text><circle cx="1146.5" cy="671" r="4.6" fill="#465258"/><text x="1146.5" y="674.3" font-size="8" font-weight="bold" fill="#f4f4f4" text-anchor="middle">H</text><circle cx="1157.8" cy="671" r="4.6" fill="#465258"/><text x="1157.8" y="674.3" font-size="8" font-weight="bold" fill="#f4f4f4" text-anchor="middle">N</text><rect x="1194.8" y="662.8" width="35.4" height="10.4" rx="5.2" fill="#5d6569" stroke="#26343a" stroke-width="1.6"/><circle cx="1204" cy="664.2" r="1.1" fill="#a8a8a8"/><path d="M1203.5 665.5L1201 669L1199 672M1201 669L1204 671L1203 673M1203 666L1206 668L1207.5 667M1202.5 666L1199.5 667" stroke="#a8a8a8" stroke-width="1.1" fill="none"/><path d="M1211 663V671.5M1208 668.5L1211 672L1214 668.5" stroke="#7e7272" stroke-width="1.4" fill="none"/><text x="1217.5" y="671.5" font-size="9.5" fill="#f4f4f4">16</text><rect x="1233" y="665" width="34.900000000000006" height="12" rx="6" fill="#26343a"/><circle cx="1239.2" cy="671" r="4.6" fill="#465258"/><text x="1239.2" y="674.3" font-size="8" font-weight="bold" fill="#f4f4f4" text-anchor="middle">B</text><circle cx="1250.5" cy="671" r="4.6" fill="#465258"/><text x="1250.5" y="674.3" font-size="8" font-weight="bold" fill="#f4f4f4" text-anchor="middle">H</text><circle cx="1261.8" cy="671" r="4.6" fill="#465258"/><text x="1261.8" y="674.3" font-size="8" font-weight="bold" fill="#f4f4f4" text-anchor="middle">N</text><rect x="1272" y="665" width="34.900000000000006" height="12" rx="6" fill="#26343a"/><circle cx="1278.2" cy="671" r="4.6" fill="#465258"/><text x="1278.2" y="674.3" font-size="8" font-weight="bold" fill="#f4f4f4" text-anchor="middle">B</text><circle cx="1289.5" cy="671" r="4.6" fill="#465258"/><text x="1289.5" y="674.3" font-size="8" font-weight="bold" fill="#f4f4f4" text-anchor="middle">H</text><circle cx="1300.8" cy="671" r="4.6" fill="#465258"/><text x="1300.8" y="674.3" font-size="8" font-weight="bold" fill="#f4f4f4" text-anchor="middle">N</text><rect x="645" y="753" width="34.900000000000006" height="12" rx="6" fill="#26343a"/><circle cx="651.2" cy="759" r="4.6" fill="#465258"/><text x="651.2" y="762.3" font-size="8" font-weight="bold" fill="#f4f4f4" text-anchor="middle">B</text><circle cx="662.5" cy="759" r="4.6" fill="#465258"/><text x="662.5" y="762.3" font-size="8" font-weight="bold" fill="#f4f4f4" text-anchor="middle">H</text><circle cx="673.8000000000001" cy="759" r="4.6" fill="#465258"/><text x="673.8000000000001" y="762.3" font-size="8" font-weight="bold" fill="#f4f4f4" text-anchor="middle">N</text><rect x="680.8" y="750.8" width="35.4" height="10.4" rx="5.2" fill="#5d6569" stroke="#26343a" stroke-width="1.6"/><text x="685.5" y="760" font-size="10" fill="#f4f4f4">E</text><path d="M697 751V759.5M694 756.5L697 760L700 756.5" stroke="#7e7272" stroke-width="1.4" fill="none"/><text x="703.5" y="759.5" font-size="9.5" fill="#f4f4f4">03</text><rect x="721" y="753" width="34.900000000000006" height="12" rx="6" fill="#26343a"/><circle cx="727.2" cy="759" r="4.6" fill="#465258"/><text x="727.2" y="762.3" font-size="8" font-weight="bold" fill="#f4f4f4" text-anchor="middle">B</text><circle cx="738.5" cy="759" r="4.6" fill="#465258"/><text x="738.5" y="762.3" font-size="8" font-weight="bold" fill="#f4f4f4" text-anchor="middle">H</text><circle cx="749.8000000000001" cy="759" r="4.6" fill="#465258"/><text x="749.8000000000001" y="762.3" font-size="8" font-weight="bold" fill="#f4f4f4" text-anchor="middle">N</text><rect x="767.8" y="750.8" width="35.4" height="10.4" rx="5.2" fill="#5d6569" stroke="#26343a" stroke-width="1.6"/><circle cx="777" cy="752.2" r="1.1" fill="#a8a8a8"/><path d="M776.5 753.5L774 757L772 760M774 757L777 759L776 761M776 754L779 756L780.5 755M775.5 754L772.5 755" stroke="#a8a8a8" stroke-width="1.1" fill="none"/><path d="M784 761V752.5M781 755.5L784 752L787 755.5" stroke="#7e7272" stroke-width="1.4" fill="none"/><text x="790.5" y="759.5" font-size="9.5" fill="#f4f4f4">19</text><rect x="806" y="753" width="34.900000000000006" height="12" rx="6" fill="#26343a"/><circle cx="812.2" cy="759" r="4.6" fill="#465258"/><text x="812.2" y="762.3" font-size="8" font-weight="bold" fill="#f4f4f4" text-anchor="middle">B</text><circle cx="823.5" cy="759" r="4.6" fill="#465258"/><text x="823.5" y="762.3" font-size="8" font-weight="bold" fill="#f4f4f4" text-anchor="middle">H</text><circle cx="834.8000000000001" cy="759" r="4.6" fill="#465258"/><text x="834.8000000000001" y="762.3" font-size="8" font-weight="bold" fill="#f4f4f4" text-anchor="middle">N</text><rect x="910.8" y="750.8" width="35.4" height="10.4" rx="5.2" fill="#5d6569" stroke="#26343a" stroke-width="1.6"/><circle cx="920" cy="752.2" r="1.1" fill="#a8a8a8"/><path d="M919.5 753.5L917 757L915 760M917 757L920 759L919 761M919 754L922 756L923.5 755M918.5 754L915.5 755" stroke="#a8a8a8" stroke-width="1.1" fill="none"/><path d="M927 761V752.5M924 755.5L927 752L930 755.5" stroke="#7e7272" stroke-width="1.4" fill="none"/><text x="933.5" y="759.5" font-size="9.5" fill="#f4f4f4">18</text><rect x="949" y="753" width="34.900000000000006" height="12" rx="6" fill="#26343a"/><circle cx="955.2" cy="759" r="4.6" fill="#465258"/><text x="955.2" y="762.3" font-size="8" font-weight="bold" fill="#f4f4f4" text-anchor="middle">B</text><circle cx="966.5" cy="759" r="4.6" fill="#465258"/><text x="966.5" y="762.3" font-size="8" font-weight="bold" fill="#f4f4f4" text-anchor="middle">H</text><circle cx="977.8000000000001" cy="759" r="4.6" fill="#465258"/><text x="977.8000000000001" y="762.3" font-size="8" font-weight="bold" fill="#f4f4f4" text-anchor="middle">N</text><rect x="1051.8" y="750.8" width="35.4" height="10.4" rx="5.2" fill="#5d6569" stroke="#26343a" stroke-width="1.6"/><circle cx="1061" cy="752.2" r="1.1" fill="#a8a8a8"/><path d="M1060.5 753.5L1058 757L1056 760M1058 757L1061 759L1060 761M1060 754L1063 756L1064.5 755M1059.5 754L1056.5 755" stroke="#a8a8a8" stroke-width="1.1" fill="none"/><path d="M1068 761V752.5M1065 755.5L1068 752L1071 755.5" stroke="#7e7272" stroke-width="1.4" fill="none"/><text x="1074.5" y="759.5" font-size="9.5" fill="#f4f4f4">17</text><rect x="1090" y="753" width="34.900000000000006" height="12" rx="6" fill="#26343a"/><circle cx="1096.2" cy="759" r="4.6" fill="#465258"/><text x="1096.2" y="762.3" font-size="8" font-weight="bold" fill="#f4f4f4" text-anchor="middle">B</text><circle cx="1107.5" cy="759" r="4.6" fill="#465258"/><text x="1107.5" y="762.3" font-size="8" font-weight="bold" fill="#f4f4f4" text-anchor="middle">H</text><circle cx="1118.8" cy="759" r="4.6" fill="#465258"/><text x="1118.8" y="762.3" font-size="8" font-weight="bold" fill="#f4f4f4" text-anchor="middle">N</text><rect x="845" y="753" width="34.900000000000006" height="12" rx="6" fill="#26343a"/><circle cx="851.2" cy="759" r="4.6" fill="#465258"/><text x="851.2" y="762.3" font-size="8" font-weight="bold" fill="#f4f4f4" text-anchor="middle">B</text><circle cx="862.5" cy="759" r="4.6" fill="#465258"/><text x="862.5" y="762.3" font-size="8" font-weight="bold" fill="#f4f4f4" text-anchor="middle">H</text><circle cx="873.8000000000001" cy="759" r="4.6" fill="#465258"/><text x="873.8000000000001" y="762.3" font-size="8" font-weight="bold" fill="#f4f4f4" text-anchor="middle">N</text><rect x="985" y="757.5" width="34.900000000000006" height="12" rx="6" fill="#26343a"/><circle cx="991.2" cy="763.5" r="4.6" fill="#465258"/><text x="991.2" y="766.8" font-size="8" font-weight="bold" fill="#f4f4f4" text-anchor="middle">B</text><circle cx="1002.5" cy="763.5" r="4.6" fill="#465258"/><text x="1002.5" y="766.8" font-size="8" font-weight="bold" fill="#f4f4f4" text-anchor="middle">H</text><circle cx="1013.8000000000001" cy="763.5" r="4.6" fill="#465258"/><text x="1013.8000000000001" y="766.8" font-size="8" font-weight="bold" fill="#f4f4f4" text-anchor="middle">N</text><rect x="1128" y="753" width="34.900000000000006" height="12" rx="6" fill="#26343a"/><circle cx="1134.2" cy="759" r="4.6" fill="#465258"/><text x="1134.2" y="762.3" font-size="8" font-weight="bold" fill="#f4f4f4" text-anchor="middle">B</text><circle cx="1145.5" cy="759" r="4.6" fill="#465258"/><text x="1145.5" y="762.3" font-size="8" font-weight="bold" fill="#f4f4f4" text-anchor="middle">H</text><circle cx="1156.8" cy="759" r="4.6" fill="#465258"/><text x="1156.8" y="762.3" font-size="8" font-weight="bold" fill="#f4f4f4" text-anchor="middle">N</text><rect x="1193.8" y="750.8" width="35.4" height="10.4" rx="5.2" fill="#5d6569" stroke="#19aee8" stroke-width="2"/><circle cx="1203" cy="752.2" r="1.1" fill="#a8a8a8"/><path d="M1202.5 753.5L1200 757L1198 760M1200 757L1203 759L1202 761M1202 754L1205 756L1206.5 755M1201.5 754L1198.5 755" stroke="#a8a8a8" stroke-width="1.1" fill="none"/><path d="M1210 761V752.5M1207 755.5L1210 752L1213 755.5" stroke="#ffffff" stroke-width="2" fill="none"/><text x="1216.5" y="759.5" font-size="9.5" fill="#f4f4f4">16</text><rect x="1232" y="754" width="34.900000000000006" height="12" rx="6" fill="#26343a"/><circle cx="1238.2" cy="760" r="4.6" fill="#465258"/><text x="1238.2" y="763.3" font-size="8" font-weight="bold" fill="#f4f4f4" text-anchor="middle">B</text><circle cx="1249.5" cy="760" r="4.6" fill="#465258"/><text x="1249.5" y="763.3" font-size="8" font-weight="bold" fill="#f4f4f4" text-anchor="middle">H</text><circle cx="1260.8" cy="760" r="4.6" fill="#465258"/><text x="1260.8" y="763.3" font-size="8" font-weight="bold" fill="#f4f4f4" text-anchor="middle">N</text><rect x="1275" y="746.4" width="34.900000000000006" height="12" rx="6" fill="#26343a"/><circle cx="1281.2" cy="752.4" r="4.6" fill="#465258"/><text x="1281.2" y="755.6999999999999" font-size="8" font-weight="bold" fill="#f4f4f4" text-anchor="middle">B</text><circle cx="1292.5" cy="752.4" r="4.6" fill="#465258"/><text x="1292.5" y="755.6999999999999" font-size="8" font-weight="bold" fill="#f4f4f4" text-anchor="middle">H</text><circle cx="1303.8" cy="752.4" r="4.6" fill="#465258"/><text x="1303.8" y="755.6999999999999" font-size="8" font-weight="bold" fill="#f4f4f4" text-anchor="middle">N</text><rect x="1312" y="754" width="34.900000000000006" height="12" rx="6" fill="#26343a"/><circle cx="1318.2" cy="760" r="4.6" fill="#465258"/><text x="1318.2" y="763.3" font-size="8" font-weight="bold" fill="#f4f4f4" text-anchor="middle">B</text><circle cx="1329.5" cy="760" r="4.6" fill="#465258"/><text x="1329.5" y="763.3" font-size="8" font-weight="bold" fill="#f4f4f4" text-anchor="middle">H</text><circle cx="1340.8" cy="760" r="4.6" fill="#465258"/><text x="1340.8" y="763.3" font-size="8" font-weight="bold" fill="#f4f4f4" text-anchor="middle">N</text></g><rect x="705" y="820" width="23.6" height="12" rx="6" fill="#26343a"/><circle cx="711.2" cy="826" r="4.6" fill="#465258"/><text x="711.2" y="829.3" font-size="8" font-weight="bold" fill="#f4f4f4" text-anchor="middle">B</text><circle cx="722.5" cy="826" r="4.6" fill="#465258"/><text x="722.5" y="829.3" font-size="8" font-weight="bold" fill="#f4f4f4" text-anchor="middle">N</text><rect x="775" y="820" width="23.6" height="12" rx="6" fill="#26343a"/><circle cx="781.2" cy="826" r="4.6" fill="#465258"/><text x="781.2" y="829.3" font-size="8" font-weight="bold" fill="#f4f4f4" text-anchor="middle">B</text><circle cx="792.5" cy="826" r="4.6" fill="#465258"/><text x="792.5" y="829.3" font-size="8" font-weight="bold" fill="#f4f4f4" text-anchor="middle">N</text><rect x="847" y="820" width="23.6" height="12" rx="6" fill="#26343a"/><circle cx="853.2" cy="826" r="4.6" fill="#465258"/><text x="853.2" y="829.3" font-size="8" font-weight="bold" fill="#f4f4f4" text-anchor="middle">B</text><circle cx="864.5" cy="826" r="4.6" fill="#465258"/><text x="864.5" y="829.3" font-size="8" font-weight="bold" fill="#f4f4f4" text-anchor="middle">N</text><rect x="918" y="820" width="23.6" height="12" rx="6" fill="#26343a"/><circle cx="924.2" cy="826" r="4.6" fill="#465258"/><text x="924.2" y="829.3" font-size="8" font-weight="bold" fill="#f4f4f4" text-anchor="middle">B</text><circle cx="935.5" cy="826" r="4.6" fill="#465258"/><text x="935.5" y="829.3" font-size="8" font-weight="bold" fill="#f4f4f4" text-anchor="middle">N</text><rect x="989" y="820" width="23.6" height="12" rx="6" fill="#26343a"/><circle cx="995.2" cy="826" r="4.6" fill="#465258"/><text x="995.2" y="829.3" font-size="8" font-weight="bold" fill="#f4f4f4" text-anchor="middle">B</text><circle cx="1006.5" cy="826" r="4.6" fill="#465258"/><text x="1006.5" y="829.3" font-size="8" font-weight="bold" fill="#f4f4f4" text-anchor="middle">N</text><rect x="1059" y="820" width="23.6" height="12" rx="6" fill="#26343a"/><circle cx="1065.2" cy="826" r="4.6" fill="#465258"/><text x="1065.2" y="829.3" font-size="8" font-weight="bold" fill="#f4f4f4" text-anchor="middle">B</text><circle cx="1076.5" cy="826" r="4.6" fill="#465258"/><text x="1076.5" y="829.3" font-size="8" font-weight="bold" fill="#f4f4f4" text-anchor="middle">N</text><rect x="1131" y="820" width="23.6" height="12" rx="6" fill="#26343a"/><circle cx="1137.2" cy="826" r="4.6" fill="#465258"/><text x="1137.2" y="829.3" font-size="8" font-weight="bold" fill="#f4f4f4" text-anchor="middle">B</text><circle cx="1148.5" cy="826" r="4.6" fill="#465258"/><text x="1148.5" y="829.3" font-size="8" font-weight="bold" fill="#f4f4f4" text-anchor="middle">N</text><rect x="1201" y="820" width="23.6" height="12" rx="6" fill="#26343a"/><circle cx="1207.2" cy="826" r="4.6" fill="#465258"/><text x="1207.2" y="829.3" font-size="8" font-weight="bold" fill="#f4f4f4" text-anchor="middle">B</text><circle cx="1218.5" cy="826" r="4.6" fill="#465258"/><text x="1218.5" y="829.3" font-size="8" font-weight="bold" fill="#f4f4f4" text-anchor="middle">N</text><rect x="1282" y="820" width="23.6" height="12" rx="6" fill="#26343a"/><circle cx="1288.2" cy="826" r="4.6" fill="#465258"/><text x="1288.2" y="829.3" font-size="8" font-weight="bold" fill="#f4f4f4" text-anchor="middle">B</text><circle cx="1299.5" cy="826" r="4.6" fill="#465258"/><text x="1299.5" y="829.3" font-size="8" font-weight="bold" fill="#f4f4f4" text-anchor="middle">N</text></svg><div class="a" style="left:1334px;top:645px;width:23px;height:42px;background:linear-gradient(#939da1,#5b6468);border-radius:3px;box-shadow:0 1px 1px rgba(0,0,0,.6)"></div><svg class="a" style="left:1340px;top:660px" width="10" height="11"><path d="M1.5 1V10L8.5 5.5Z" fill="none" stroke="#111" stroke-width="1.3"/></svg><div class="a" style="left:564px;top:848px;width:88px;height:20px;background:#262c2f;border-radius:3px"></div><div class="t" style="left:564px;width:88px;text-align:center;top:853px;font-size:11px;font-weight:bold;color:#f4f4f4">Meldingen</div><div class="a" style="left:661px;top:845px;width:91px;height:23px;background:linear-gradient(#3a4245,#6d777b 50%,#828c90);border-radius:0 0 3px 3px"></div><div class="t" style="left:677px;top:853px;font-size:11px;font-weight:bold;color:#f4f4f4">Verkeer</div><div class="a" style="left:720px;top:853px;width:14px;height:10px;border:1.5px solid #7cc8f0"></div><div class="a" style="left:758px;top:848px;width:89px;height:20px;background:#262c2f;border-radius:3px"></div><div class="t" style="left:758px;width:89px;text-align:center;top:853px;font-size:11px;font-weight:bold;color:#f4f4f4">Systeem Li</div><div class="a" style="left:856px;top:848px;width:88px;height:20px;background:#262c2f;border-radius:3px"></div><div class="t" style="left:856px;width:88px;text-align:center;top:853px;font-size:11px;font-weight:bold;color:#f4f4f4">Systeem Re</div><div class="a" style="left:953px;top:848px;width:90px;height:20px;background:#262c2f;border-radius:3px"></div><div class="t" style="left:953px;width:90px;text-align:center;top:853px;font-size:11px;font-weight:bold;color:#f4f4f4">DGB + Algemeen</div><div class="t" style="right:1px;top:866px;font-size:11px;color:#fff">IXAS, versie 10.65</div><div class="a" style="left:0;top:878px;width:1366px;height:1px;background:#4a4a4a"></div></body></html>
